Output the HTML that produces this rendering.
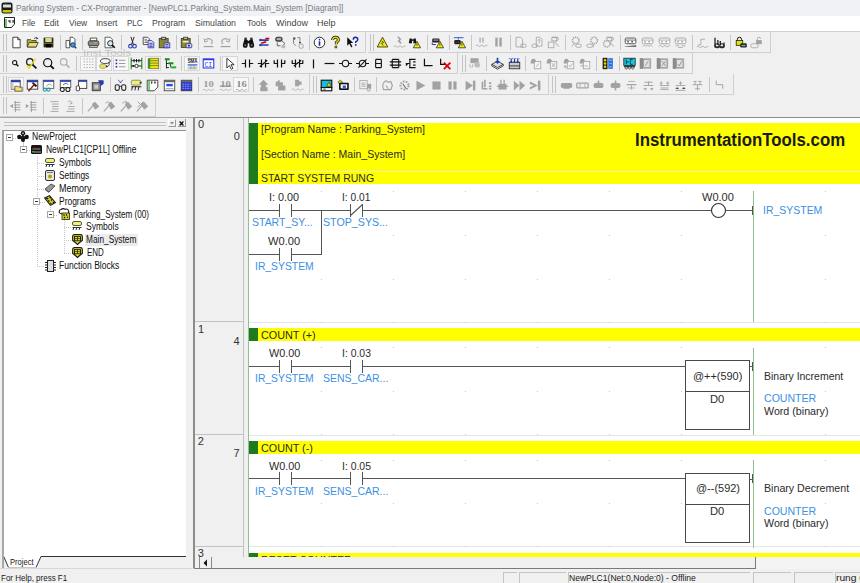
<!DOCTYPE html><html><head><meta charset="utf-8"><style>html,body{margin:0;padding:0;}body{width:860px;height:583px;overflow:hidden;position:relative;background:#f0f0f0;font-family:"Liberation Sans", sans-serif;}div{box-sizing:border-box;}svg{position:absolute;overflow:visible}</style></head><body>
<div style="position:absolute;left:0px;top:0px;width:860px;height:16px;background:#f1f2f6"></div>
<div style="position:absolute;left:0px;top:16px;width:860px;height:15px;background:#ffffff"></div>
<div style="position:absolute;left:0px;top:31px;width:860px;height:1px;background:#cfcfcf"></div>
<div style="position:absolute;left:0px;top:32px;width:860px;height:85px;background:#f0f0f0"></div>
<div style="position:absolute;left:0px;top:117px;width:860px;height:1px;background:#a9a9a9"></div>
<div style="position:absolute;left:0px;top:118px;width:194px;height:451px;background:#f0f0f0"></div>
<div style="position:absolute;left:4px;top:122px;width:162px;height:1px;background:#c0c0c0"></div>
<div style="position:absolute;left:4px;top:125px;width:162px;height:1px;background:#c0c0c0"></div>
<div style="position:absolute;left:2px;top:130px;width:184px;height:427px;background:#fff;border-top:1px solid #909090;border-left:2px solid #a8a8a8;"></div>
<div style="position:absolute;left:193px;top:117px;width:667px;height:452px;background:#fff;border-left:2px solid #8c8c8c;border-top:1px solid #8c8c8c;border-bottom:1px solid #8c8c8c"></div>
<div style="position:absolute;left:0px;top:569px;width:860px;height:14px;background:#f0f0f0"></div>
<div style="position:absolute;left:15.586945px;top:4.03px;font-size:9px;line-height:9px;color:#7c7c7c;font-weight:normal;white-space:nowrap;transform-origin:0 0;transform:scaleX(0.9179);">Parking System - CX-Programmer - [NewPLC1.Parking_System.Main_System [Diagram]]</div>
<div style="position:absolute;left:21.586855px;top:19.33px;font-size:9px;line-height:9px;color:#444;font-weight:normal;white-space:nowrap;transform-origin:0 0;transform:scaleX(0.9181);">File</div>
<div style="position:absolute;left:44.168945px;top:19.33px;font-size:9px;line-height:9px;color:#444;font-weight:normal;white-space:nowrap;transform-origin:0 0;transform:scaleX(0.9579);">Edit</div>
<div style="position:absolute;left:68.57583px;top:19.33px;font-size:9px;line-height:9px;color:#444;font-weight:normal;white-space:nowrap;transform-origin:0 0;transform:scaleX(0.9426);">View</div>
<div style="position:absolute;left:96.27322000000001px;top:19.33px;font-size:9px;line-height:9px;color:#444;font-weight:normal;white-space:nowrap;transform-origin:0 0;transform:scaleX(0.9484);">Insert</div>
<div style="position:absolute;left:127.20188499999999px;top:19.33px;font-size:9px;line-height:9px;color:#444;font-weight:normal;white-space:nowrap;transform-origin:0 0;transform:scaleX(0.8847);">PLC</div>
<div style="position:absolute;left:152.36494000000002px;top:19.33px;font-size:9px;line-height:9px;color:#444;font-weight:normal;white-space:nowrap;transform-origin:0 0;transform:scaleX(0.9668);">Program</div>
<div style="position:absolute;left:195.36237500000001px;top:19.33px;font-size:9px;line-height:9px;color:#444;font-weight:normal;white-space:nowrap;transform-origin:0 0;transform:scaleX(0.9725);">Simulation</div>
<div style="position:absolute;left:246.583885px;top:19.33px;font-size:9px;line-height:9px;color:#444;font-weight:normal;white-space:nowrap;transform-origin:0 0;transform:scaleX(0.9247);">Tools</div>
<div style="position:absolute;left:275.551665px;top:19.33px;font-size:9px;line-height:9px;color:#444;font-weight:normal;white-space:nowrap;transform-origin:0 0;transform:scaleX(0.9963);">Window</div>
<div style="position:absolute;left:316.74784px;top:19.33px;font-size:9px;line-height:9px;color:#444;font-weight:normal;white-space:nowrap;transform-origin:0 0;transform:scaleX(1.0048);">Help</div>
<div style="position:absolute;left:85px;top:234px;width:53px;height:12px;background:#ececec"></div>
<div style="position:absolute;left:32.1712px;top:132.09px;font-size:10px;line-height:10px;color:#101010;font-weight:normal;white-space:nowrap;transform-origin:0 0;transform:scaleX(0.8576);">NewProject</div>
<div style="position:absolute;left:45.57775px;top:145.09px;font-size:10px;line-height:10px;color:#101010;font-weight:normal;white-space:nowrap;transform-origin:0 0;transform:scaleX(0.8445);">NewPLC1[CP1L] Offline</div>
<div style="position:absolute;left:59.3784px;top:158.09px;font-size:10px;line-height:10px;color:#101010;font-weight:normal;white-space:nowrap;transform-origin:0 0;transform:scaleX(0.8432);">Symbols</div>
<div style="position:absolute;left:59.381699999999995px;top:171.09px;font-size:10px;line-height:10px;color:#101010;font-weight:normal;white-space:nowrap;transform-origin:0 0;transform:scaleX(0.8366);">Settings</div>
<div style="position:absolute;left:59.3516px;top:184.09px;font-size:10px;line-height:10px;color:#101010;font-weight:normal;white-space:nowrap;transform-origin:0 0;transform:scaleX(0.8968);">Memory</div>
<div style="position:absolute;left:59.377449999999996px;top:196.69px;font-size:10px;line-height:10px;color:#101010;font-weight:normal;white-space:nowrap;transform-origin:0 0;transform:scaleX(0.8451);">Programs</div>
<div style="position:absolute;left:73.09295px;top:209.5px;font-size:10px;line-height:10px;color:#101010;font-weight:normal;white-space:nowrap;transform-origin:0 0;transform:scaleX(0.8141);">Parking_System (00)</div>
<div style="position:absolute;left:86.4744px;top:222.09px;font-size:10px;line-height:10px;color:#101010;font-weight:normal;white-space:nowrap;transform-origin:0 0;transform:scaleX(0.8512);">Symbols</div>
<div style="position:absolute;left:86.4846px;top:235.09px;font-size:10px;line-height:10px;color:#101010;font-weight:normal;white-space:nowrap;transform-origin:0 0;transform:scaleX(0.8308);">Main_System</div>
<div style="position:absolute;left:86.50250000000001px;top:248.09px;font-size:10px;line-height:10px;color:#101010;font-weight:normal;white-space:nowrap;transform-origin:0 0;transform:scaleX(0.795);">END</div>
<div style="position:absolute;left:59.0725px;top:260.89px;font-size:10px;line-height:10px;color:#101010;font-weight:normal;white-space:nowrap;transform-origin:0 0;transform:scaleX(0.855);">Function Blocks</div>
<div style="position:absolute;left:1.2002875px;top:573.26px;font-size:9.5px;line-height:9.5px;color:#202020;font-weight:normal;white-space:nowrap;transform-origin:0 0;transform:scaleX(0.8415);">For Help, press F1</div>
<div style="position:absolute;left:195px;top:118px;width:48px;height:450px;background:#f0f0f0"></div>
<div style="position:absolute;left:243px;top:118px;width:1px;height:450px;background:#c2c2c2"></div>
<div style="position:absolute;left:244px;top:118px;width:4px;height:450px;background:#f0f0f0"></div>
<div style="position:absolute;left:195px;top:321px;width:48px;height:1px;background:#c2c2c2"></div>
<div style="position:absolute;left:195px;top:434px;width:48px;height:1px;background:#c2c2c2"></div>
<div style="position:absolute;left:195px;top:546px;width:48px;height:1px;background:#c2c2c2"></div>
<div style="position:absolute;left:198px;top:118.96px;font-size:11px;line-height:11px;color:#333;font-weight:normal;white-space:nowrap;">0</div>
<div style="position:absolute;left:233.7px;top:130.56px;font-size:11px;line-height:11px;color:#333;font-weight:normal;white-space:nowrap;">0</div>
<div style="position:absolute;left:198px;top:324.16px;font-size:11px;line-height:11px;color:#333;font-weight:normal;white-space:nowrap;">1</div>
<div style="position:absolute;left:233.6px;top:335.56px;font-size:11px;line-height:11px;color:#333;font-weight:normal;white-space:nowrap;">4</div>
<div style="position:absolute;left:197.8px;top:435.96px;font-size:11px;line-height:11px;color:#333;font-weight:normal;white-space:nowrap;">2</div>
<div style="position:absolute;left:233.6px;top:447.56px;font-size:11px;line-height:11px;color:#333;font-weight:normal;white-space:nowrap;">7</div>
<div style="position:absolute;left:197.8px;top:548.16px;font-size:11px;line-height:11px;color:#333;font-weight:normal;white-space:nowrap;">3</div>
<div style="position:absolute;left:248px;top:118px;width:1px;height:439px;background:#8ec28e"></div>
<div style="position:absolute;left:249px;top:322px;width:611px;height:1px;background:#e6e6e6"></div>
<div style="position:absolute;left:249px;top:435px;width:611px;height:1px;background:#e6e6e6"></div>
<div style="position:absolute;left:249px;top:546px;width:611px;height:1px;background:#e6e6e6"></div>
<div style="position:absolute;left:258px;top:123px;width:602px;height:61px;background:#ffff00"></div>
<div style="position:absolute;left:249px;top:123px;width:9px;height:61px;background:#1f7a1f"></div>
<div style="position:absolute;left:258px;top:171px;width:602px;height:1px;background:#f2f2a8"></div>
<div style="position:absolute;left:260.769085px;top:124.06px;font-size:11px;line-height:11px;color:#2b2b2b;font-weight:normal;white-space:nowrap;transform-origin:0 0;transform:scaleX(0.9653);">[Program Name : Parking_System]</div>
<div style="position:absolute;left:260.775355px;top:148.56px;font-size:11px;line-height:11px;color:#2b2b2b;font-weight:normal;white-space:nowrap;transform-origin:0 0;transform:scaleX(0.9539);">[Section Name : Main_System]</div>
<div style="position:absolute;left:260.77563000000004px;top:172.86px;font-size:11px;line-height:11px;color:#2b2b2b;font-weight:normal;white-space:nowrap;transform-origin:0 0;transform:scaleX(0.9534);">START SYSTEM RUNG</div>
<div style="position:absolute;left:635.35814px;top:131.05px;font-size:18px;line-height:18px;color:#1a1a1a;font-weight:bold;white-space:nowrap;transform-origin:0 0;transform:scaleX(0.9354);">InstrumentationTools.com</div>
<div style="position:absolute;left:258px;top:328px;width:602px;height:13px;background:#ffff00"></div>
<div style="position:absolute;left:249px;top:328px;width:9px;height:13px;background:#1f7a1f"></div>
<div style="position:absolute;left:261.160285px;top:329.76px;font-size:11px;line-height:11px;color:#2b2b2b;font-weight:normal;white-space:nowrap;transform-origin:0 0;transform:scaleX(0.9813);">COUNT (+)</div>
<div style="position:absolute;left:258px;top:441px;width:602px;height:13px;background:#ffff00"></div>
<div style="position:absolute;left:249px;top:441px;width:9px;height:13px;background:#1f7a1f"></div>
<div style="position:absolute;left:261.16132999999996px;top:442.76px;font-size:11px;line-height:11px;color:#2b2b2b;font-weight:normal;white-space:nowrap;transform-origin:0 0;transform:scaleX(0.9794);">COUNT (-)</div>
<div style="position:absolute;left:258px;top:553px;width:602px;height:13px;background:#ffff00"></div>
<div style="position:absolute;left:249px;top:553px;width:9px;height:13px;background:#1f7a1f"></div>
<div style="position:absolute;left:261.169085px;top:554.76px;font-size:11px;line-height:11px;color:#2b2b2b;font-weight:normal;white-space:nowrap;transform-origin:0 0;transform:scaleX(0.9653);">RESET COUNTER</div>
<div style="position:absolute;left:321px;top:191px;width:1px;height:1px;background:#c4c4c4"></div>
<div style="position:absolute;left:393px;top:191px;width:1px;height:1px;background:#c4c4c4"></div>
<div style="position:absolute;left:465px;top:191px;width:1px;height:1px;background:#c4c4c4"></div>
<div style="position:absolute;left:537px;top:191px;width:1px;height:1px;background:#c4c4c4"></div>
<div style="position:absolute;left:609px;top:191px;width:1px;height:1px;background:#c4c4c4"></div>
<div style="position:absolute;left:681px;top:191px;width:1px;height:1px;background:#c4c4c4"></div>
<div style="position:absolute;left:825px;top:191px;width:1px;height:1px;background:#c4c4c4"></div>
<div style="position:absolute;left:321px;top:235px;width:1px;height:1px;background:#c4c4c4"></div>
<div style="position:absolute;left:393px;top:235px;width:1px;height:1px;background:#c4c4c4"></div>
<div style="position:absolute;left:465px;top:235px;width:1px;height:1px;background:#c4c4c4"></div>
<div style="position:absolute;left:537px;top:235px;width:1px;height:1px;background:#c4c4c4"></div>
<div style="position:absolute;left:609px;top:235px;width:1px;height:1px;background:#c4c4c4"></div>
<div style="position:absolute;left:681px;top:235px;width:1px;height:1px;background:#c4c4c4"></div>
<div style="position:absolute;left:825px;top:235px;width:1px;height:1px;background:#c4c4c4"></div>
<div style="position:absolute;left:321px;top:279px;width:1px;height:1px;background:#c4c4c4"></div>
<div style="position:absolute;left:393px;top:279px;width:1px;height:1px;background:#c4c4c4"></div>
<div style="position:absolute;left:465px;top:279px;width:1px;height:1px;background:#c4c4c4"></div>
<div style="position:absolute;left:537px;top:279px;width:1px;height:1px;background:#c4c4c4"></div>
<div style="position:absolute;left:609px;top:279px;width:1px;height:1px;background:#c4c4c4"></div>
<div style="position:absolute;left:681px;top:279px;width:1px;height:1px;background:#c4c4c4"></div>
<div style="position:absolute;left:825px;top:279px;width:1px;height:1px;background:#c4c4c4"></div>
<div style="position:absolute;left:321px;top:322px;width:1px;height:1px;background:#c4c4c4"></div>
<div style="position:absolute;left:393px;top:322px;width:1px;height:1px;background:#c4c4c4"></div>
<div style="position:absolute;left:465px;top:322px;width:1px;height:1px;background:#c4c4c4"></div>
<div style="position:absolute;left:537px;top:322px;width:1px;height:1px;background:#c4c4c4"></div>
<div style="position:absolute;left:609px;top:322px;width:1px;height:1px;background:#c4c4c4"></div>
<div style="position:absolute;left:681px;top:322px;width:1px;height:1px;background:#c4c4c4"></div>
<div style="position:absolute;left:825px;top:322px;width:1px;height:1px;background:#c4c4c4"></div>
<div style="position:absolute;left:321px;top:347px;width:1px;height:1px;background:#c4c4c4"></div>
<div style="position:absolute;left:393px;top:347px;width:1px;height:1px;background:#c4c4c4"></div>
<div style="position:absolute;left:465px;top:347px;width:1px;height:1px;background:#c4c4c4"></div>
<div style="position:absolute;left:537px;top:347px;width:1px;height:1px;background:#c4c4c4"></div>
<div style="position:absolute;left:609px;top:347px;width:1px;height:1px;background:#c4c4c4"></div>
<div style="position:absolute;left:681px;top:347px;width:1px;height:1px;background:#c4c4c4"></div>
<div style="position:absolute;left:825px;top:347px;width:1px;height:1px;background:#c4c4c4"></div>
<div style="position:absolute;left:321px;top:391px;width:1px;height:1px;background:#c4c4c4"></div>
<div style="position:absolute;left:393px;top:391px;width:1px;height:1px;background:#c4c4c4"></div>
<div style="position:absolute;left:465px;top:391px;width:1px;height:1px;background:#c4c4c4"></div>
<div style="position:absolute;left:537px;top:391px;width:1px;height:1px;background:#c4c4c4"></div>
<div style="position:absolute;left:609px;top:391px;width:1px;height:1px;background:#c4c4c4"></div>
<div style="position:absolute;left:681px;top:391px;width:1px;height:1px;background:#c4c4c4"></div>
<div style="position:absolute;left:825px;top:391px;width:1px;height:1px;background:#c4c4c4"></div>
<div style="position:absolute;left:321px;top:434px;width:1px;height:1px;background:#c4c4c4"></div>
<div style="position:absolute;left:393px;top:434px;width:1px;height:1px;background:#c4c4c4"></div>
<div style="position:absolute;left:465px;top:434px;width:1px;height:1px;background:#c4c4c4"></div>
<div style="position:absolute;left:537px;top:434px;width:1px;height:1px;background:#c4c4c4"></div>
<div style="position:absolute;left:609px;top:434px;width:1px;height:1px;background:#c4c4c4"></div>
<div style="position:absolute;left:681px;top:434px;width:1px;height:1px;background:#c4c4c4"></div>
<div style="position:absolute;left:825px;top:434px;width:1px;height:1px;background:#c4c4c4"></div>
<div style="position:absolute;left:321px;top:460px;width:1px;height:1px;background:#c4c4c4"></div>
<div style="position:absolute;left:393px;top:460px;width:1px;height:1px;background:#c4c4c4"></div>
<div style="position:absolute;left:465px;top:460px;width:1px;height:1px;background:#c4c4c4"></div>
<div style="position:absolute;left:537px;top:460px;width:1px;height:1px;background:#c4c4c4"></div>
<div style="position:absolute;left:609px;top:460px;width:1px;height:1px;background:#c4c4c4"></div>
<div style="position:absolute;left:681px;top:460px;width:1px;height:1px;background:#c4c4c4"></div>
<div style="position:absolute;left:825px;top:460px;width:1px;height:1px;background:#c4c4c4"></div>
<div style="position:absolute;left:321px;top:503px;width:1px;height:1px;background:#c4c4c4"></div>
<div style="position:absolute;left:393px;top:503px;width:1px;height:1px;background:#c4c4c4"></div>
<div style="position:absolute;left:465px;top:503px;width:1px;height:1px;background:#c4c4c4"></div>
<div style="position:absolute;left:537px;top:503px;width:1px;height:1px;background:#c4c4c4"></div>
<div style="position:absolute;left:609px;top:503px;width:1px;height:1px;background:#c4c4c4"></div>
<div style="position:absolute;left:681px;top:503px;width:1px;height:1px;background:#c4c4c4"></div>
<div style="position:absolute;left:825px;top:503px;width:1px;height:1px;background:#c4c4c4"></div>
<div style="position:absolute;left:321px;top:546px;width:1px;height:1px;background:#c4c4c4"></div>
<div style="position:absolute;left:393px;top:546px;width:1px;height:1px;background:#c4c4c4"></div>
<div style="position:absolute;left:465px;top:546px;width:1px;height:1px;background:#c4c4c4"></div>
<div style="position:absolute;left:537px;top:546px;width:1px;height:1px;background:#c4c4c4"></div>
<div style="position:absolute;left:609px;top:546px;width:1px;height:1px;background:#c4c4c4"></div>
<div style="position:absolute;left:681px;top:546px;width:1px;height:1px;background:#c4c4c4"></div>
<div style="position:absolute;left:825px;top:546px;width:1px;height:1px;background:#c4c4c4"></div>
<div style="position:absolute;left:249px;top:210px;width:30px;height:1px;background:#555555"></div>
<div style="position:absolute;left:279px;top:204px;width:1px;height:13px;background:#555555"></div>
<div style="position:absolute;left:291px;top:204px;width:1px;height:13px;background:#555555"></div>
<div style="position:absolute;left:291px;top:210px;width:59px;height:1px;background:#555555"></div>
<div style="position:absolute;left:350px;top:204px;width:1px;height:13px;background:#555555"></div>
<div style="position:absolute;left:362px;top:204px;width:1px;height:13px;background:#555555"></div>
<svg style="left:350px;top:203px" width="13" height="14"><line x1="0.5" y1="12.5" x2="12.5" y2="1.5" stroke="#555555" stroke-width="1.1"/></svg>
<div style="position:absolute;left:363px;top:210px;width:348px;height:1px;background:#555555"></div>
<svg style="left:710px;top:202px" width="17" height="17"><circle cx="8.5" cy="8.5" r="7" fill="#fff" stroke="#333" stroke-width="1.1"/></svg>
<div style="position:absolute;left:726px;top:210px;width:27px;height:1px;background:#555555"></div>
<div style="position:absolute;left:752px;top:206px;width:1px;height:9px;background:#555555"></div>
<div style="position:absolute;left:321px;top:210px;width:1px;height:45px;background:#555555"></div>
<div style="position:absolute;left:249px;top:254px;width:30px;height:1px;background:#555555"></div>
<div style="position:absolute;left:279px;top:248px;width:1px;height:13px;background:#555555"></div>
<div style="position:absolute;left:291px;top:248px;width:1px;height:13px;background:#555555"></div>
<div style="position:absolute;left:291px;top:254px;width:31px;height:1px;background:#555555"></div>
<div style="position:absolute;left:753px;top:191px;width:1px;height:131px;background:#8ec28e"></div>
<div style="position:absolute;left:269.45891px;top:191.96px;font-size:11px;line-height:11px;color:#2b2b2b;font-weight:normal;white-space:nowrap;transform-origin:0 0;transform:scaleX(0.9838);">I: 0.00</div>
<div style="position:absolute;left:251.87546500000002px;top:216.56px;font-size:11px;line-height:11px;color:#3d8fe3;font-weight:normal;white-space:nowrap;transform-origin:0 0;transform:scaleX(0.9537);">START_SY...</div>
<div style="position:absolute;left:268.444555px;top:236.06px;font-size:11px;line-height:11px;color:#2b2b2b;font-weight:normal;white-space:nowrap;transform-origin:0 0;transform:scaleX(1.0099);">W0.00</div>
<div style="position:absolute;left:255.281955px;top:260.56px;font-size:11px;line-height:11px;color:#3d8fe3;font-weight:normal;white-space:nowrap;transform-origin:0 0;transform:scaleX(0.9419);">IR_SYSTEM</div>
<div style="position:absolute;left:342.19064499999996px;top:191.96px;font-size:11px;line-height:11px;color:#2b2b2b;font-weight:normal;white-space:nowrap;transform-origin:0 0;transform:scaleX(0.9261);">I: 0.01</div>
<div style="position:absolute;left:323.46639px;top:216.56px;font-size:11px;line-height:11px;color:#3d8fe3;font-weight:normal;white-space:nowrap;transform-origin:0 0;transform:scaleX(0.9702);">STOP_SYS...</div>
<div style="position:absolute;left:702.04813px;top:191.96px;font-size:11px;line-height:11px;color:#2b2b2b;font-weight:normal;white-space:nowrap;transform-origin:0 0;transform:scaleX(1.0034);">W0.00</div>
<div style="position:absolute;left:763.476565px;top:204.56px;font-size:11px;line-height:11px;color:#3d8fe3;font-weight:normal;white-space:nowrap;transform-origin:0 0;transform:scaleX(0.9517);">IR_SYSTEM</div>
<div style="position:absolute;left:249px;top:366px;width:30px;height:1px;background:#555555"></div>
<div style="position:absolute;left:279px;top:360px;width:1px;height:13px;background:#555555"></div>
<div style="position:absolute;left:291px;top:360px;width:1px;height:13px;background:#555555"></div>
<div style="position:absolute;left:291px;top:366px;width:59px;height:1px;background:#555555"></div>
<div style="position:absolute;left:350px;top:360px;width:1px;height:13px;background:#555555"></div>
<div style="position:absolute;left:362px;top:360px;width:1px;height:13px;background:#555555"></div>
<div style="position:absolute;left:363px;top:366px;width:323px;height:1px;background:#555555"></div>
<div style="position:absolute;left:685px;top:360px;width:65px;height:70px;border:1px solid #484848;background:#fff"></div>
<div style="position:absolute;left:686px;top:391px;width:63px;height:1px;background:#484848"></div>
<div style="position:absolute;left:753px;top:348px;width:1px;height:87px;background:#8ec28e"></div>
<div style="position:absolute;left:752px;top:362px;width:1px;height:9px;background:#555555"></div>
<div style="position:absolute;left:269.057095px;top:348.36px;font-size:11px;line-height:11px;color:#2b2b2b;font-weight:normal;white-space:nowrap;transform-origin:0 0;transform:scaleX(0.9871);">W0.00</div>
<div style="position:absolute;left:255.281955px;top:373.46px;font-size:11px;line-height:11px;color:#3d8fe3;font-weight:normal;white-space:nowrap;transform-origin:0 0;transform:scaleX(0.9419);">IR_SYSTEM</div>
<div style="position:absolute;left:342.179425px;top:348.36px;font-size:11px;line-height:11px;color:#2b2b2b;font-weight:normal;white-space:nowrap;transform-origin:0 0;transform:scaleX(0.9465);">I: 0.03</div>
<div style="position:absolute;left:323.47508px;top:373.46px;font-size:11px;line-height:11px;color:#3d8fe3;font-weight:normal;white-space:nowrap;transform-origin:0 0;transform:scaleX(0.9544);">SENS_CAR...</div>
<div style="position:absolute;left:692.854565px;top:370.56px;font-size:11px;line-height:11px;color:#2b2b2b;font-weight:normal;white-space:nowrap;transform-origin:0 0;transform:scaleX(0.9917);">@++(590)</div>
<div style="position:absolute;left:710.339935px;top:393.76px;font-size:11px;line-height:11px;color:#2b2b2b;font-weight:normal;white-space:nowrap;transform-origin:0 0;transform:scaleX(1.0183);">D0</div>
<div style="position:absolute;left:764.0758500000001px;top:370.56px;font-size:11px;line-height:11px;color:#2b2b2b;font-weight:normal;white-space:nowrap;transform-origin:0 0;transform:scaleX(0.953);">Binary Increment</div>
<div style="position:absolute;left:764.07156px;top:393.36px;font-size:11px;line-height:11px;color:#3d8fe3;font-weight:normal;white-space:nowrap;transform-origin:0 0;transform:scaleX(0.9608);">COUNTER</div>
<div style="position:absolute;left:764.066335px;top:405.56px;font-size:11px;line-height:11px;color:#2b2b2b;font-weight:normal;white-space:nowrap;transform-origin:0 0;transform:scaleX(0.9703);">Word (binary)</div>
<div style="position:absolute;left:249px;top:478px;width:30px;height:1px;background:#555555"></div>
<div style="position:absolute;left:279px;top:472px;width:1px;height:13px;background:#555555"></div>
<div style="position:absolute;left:291px;top:472px;width:1px;height:13px;background:#555555"></div>
<div style="position:absolute;left:291px;top:478px;width:59px;height:1px;background:#555555"></div>
<div style="position:absolute;left:350px;top:472px;width:1px;height:13px;background:#555555"></div>
<div style="position:absolute;left:362px;top:472px;width:1px;height:13px;background:#555555"></div>
<div style="position:absolute;left:363px;top:478px;width:323px;height:1px;background:#555555"></div>
<div style="position:absolute;left:685px;top:473px;width:65px;height:70px;border:1px solid #484848;background:#fff"></div>
<div style="position:absolute;left:686px;top:504px;width:63px;height:1px;background:#484848"></div>
<div style="position:absolute;left:753px;top:460px;width:1px;height:88px;background:#8ec28e"></div>
<div style="position:absolute;left:752px;top:474px;width:1px;height:9px;background:#555555"></div>
<div style="position:absolute;left:269.057095px;top:461.06px;font-size:11px;line-height:11px;color:#2b2b2b;font-weight:normal;white-space:nowrap;transform-origin:0 0;transform:scaleX(0.9871);">W0.00</div>
<div style="position:absolute;left:255.281955px;top:486.16px;font-size:11px;line-height:11px;color:#3d8fe3;font-weight:normal;white-space:nowrap;transform-origin:0 0;transform:scaleX(0.9419);">IR_SYSTEM</div>
<div style="position:absolute;left:342.179425px;top:461.06px;font-size:11px;line-height:11px;color:#2b2b2b;font-weight:normal;white-space:nowrap;transform-origin:0 0;transform:scaleX(0.9465);">I: 0.05</div>
<div style="position:absolute;left:323.47508px;top:486.16px;font-size:11px;line-height:11px;color:#3d8fe3;font-weight:normal;white-space:nowrap;transform-origin:0 0;transform:scaleX(0.9544);">SENS_CAR...</div>
<div style="position:absolute;left:695.5021999999999px;top:483.26px;font-size:11px;line-height:11px;color:#2b2b2b;font-weight:normal;white-space:nowrap;transform-origin:0 0;transform:scaleX(0.996);">@--(592)</div>
<div style="position:absolute;left:710.339935px;top:506.46px;font-size:11px;line-height:11px;color:#2b2b2b;font-weight:normal;white-space:nowrap;transform-origin:0 0;transform:scaleX(1.0183);">D0</div>
<div style="position:absolute;left:764.067985px;top:483.26px;font-size:11px;line-height:11px;color:#2b2b2b;font-weight:normal;white-space:nowrap;transform-origin:0 0;transform:scaleX(0.9673);">Binary Decrement</div>
<div style="position:absolute;left:764.07156px;top:506.06px;font-size:11px;line-height:11px;color:#3d8fe3;font-weight:normal;white-space:nowrap;transform-origin:0 0;transform:scaleX(0.9608);">COUNTER</div>
<div style="position:absolute;left:764.066335px;top:518.26px;font-size:11px;line-height:11px;color:#2b2b2b;font-weight:normal;white-space:nowrap;transform-origin:0 0;transform:scaleX(0.9703);">Word (binary)</div>
<div style="position:absolute;left:195px;top:557px;width:665px;height:12px;background:#f4f4f4"></div>
<div style="position:absolute;left:195px;top:557px;width:561px;height:12px;background:#f0f0f0;border-right:1px solid #7a7a7a;border-bottom:1px solid #7a7a7a"></div>
<div style="position:absolute;left:199px;top:557px;width:1px;height:11px;background:#8a8a8a"></div>
<div style="position:absolute;left:211px;top:557px;width:1px;height:11px;background:#8a8a8a"></div>
<svg style="left:203px;top:559px" width="5" height="8"><path d="M4 0.5 L0.5 4 L4 7.5 Z" fill="#111"/></svg>
<div style="position:absolute;left:13px;top:138px;width:4px;height:1px;background:repeating-linear-gradient(to right,#c8c8c8 0 1px,transparent 1px 2px)"></div>
<div style="position:absolute;left:23px;top:142px;width:1px;height:5px;background:#c8c8c8"></div>
<div style="position:absolute;left:27px;top:150px;width:4px;height:1px;background:repeating-linear-gradient(to right,#c8c8c8 0 1px,transparent 1px 2px)"></div>
<div style="position:absolute;left:37px;top:156px;width:1px;height:110px;background:repeating-linear-gradient(to bottom,#c8c8c8 0 1px,transparent 1px 2px)"></div>
<div style="position:absolute;left:37px;top:163px;width:8px;height:1px;background:repeating-linear-gradient(to right,#c8c8c8 0 1px,transparent 1px 2px)"></div>
<div style="position:absolute;left:37px;top:176px;width:8px;height:1px;background:repeating-linear-gradient(to right,#c8c8c8 0 1px,transparent 1px 2px)"></div>
<div style="position:absolute;left:37px;top:189px;width:8px;height:1px;background:repeating-linear-gradient(to right,#c8c8c8 0 1px,transparent 1px 2px)"></div>
<div style="position:absolute;left:37px;top:266px;width:8px;height:1px;background:repeating-linear-gradient(to right,#c8c8c8 0 1px,transparent 1px 2px)"></div>
<div style="position:absolute;left:40px;top:202px;width:5px;height:1px;background:repeating-linear-gradient(to right,#c8c8c8 0 1px,transparent 1px 2px)"></div>
<div style="position:absolute;left:50px;top:207px;width:1px;height:8px;background:repeating-linear-gradient(to bottom,#c8c8c8 0 1px,transparent 1px 2px)"></div>
<div style="position:absolute;left:54px;top:215px;width:4px;height:1px;background:repeating-linear-gradient(to right,#c8c8c8 0 1px,transparent 1px 2px)"></div>
<div style="position:absolute;left:64px;top:220px;width:1px;height:33px;background:repeating-linear-gradient(to bottom,#c8c8c8 0 1px,transparent 1px 2px)"></div>
<div style="position:absolute;left:64px;top:227px;width:8px;height:1px;background:repeating-linear-gradient(to right,#c8c8c8 0 1px,transparent 1px 2px)"></div>
<div style="position:absolute;left:64px;top:240px;width:8px;height:1px;background:repeating-linear-gradient(to right,#c8c8c8 0 1px,transparent 1px 2px)"></div>
<div style="position:absolute;left:64px;top:253px;width:8px;height:1px;background:repeating-linear-gradient(to right,#c8c8c8 0 1px,transparent 1px 2px)"></div>
<div style="position:absolute;left:6px;top:134px;width:7px;height:7px;border:1px solid #a6a6a6;background:#fff"></div>
<div style="position:absolute;left:8px;top:137px;width:3px;height:1px;background:#333"></div>
<div style="position:absolute;left:20px;top:146px;width:7px;height:7px;border:1px solid #a6a6a6;background:#fff"></div>
<div style="position:absolute;left:22px;top:149px;width:3px;height:1px;background:#333"></div>
<div style="position:absolute;left:33px;top:198px;width:7px;height:7px;border:1px solid #a6a6a6;background:#fff"></div>
<div style="position:absolute;left:35px;top:201px;width:3px;height:1px;background:#333"></div>
<div style="position:absolute;left:47px;top:211px;width:7px;height:7px;border:1px solid #a6a6a6;background:#fff"></div>
<div style="position:absolute;left:49px;top:214px;width:3px;height:1px;background:#333"></div>
<svg style="left:17px;top:131px" width="12" height="11" viewBox="0 0 12 11"><path d="M6 2.5 V9 M2.5 6 H9.5 M2.5 6 L6 9 L9.5 6" stroke="#111" stroke-width="1.6" fill="none"/><circle cx="6" cy="2.3" r="2.2" fill="#111"/><circle cx="2.3" cy="6" r="2.2" fill="#111"/><circle cx="9.7" cy="6" r="2.2" fill="#111"/><circle cx="6" cy="9" r="2" fill="#111"/><circle cx="6" cy="2.3" r="0.8" fill="#fff"/></svg>
<svg style="left:31px;top:145px" width="11" height="9" viewBox="0 0 11 9"><rect x="0" y="0" width="11" height="9" rx="1.5" fill="#151515"/><rect x="1.5" y="3.5" width="8" height="1" fill="#999"/><rect x="3" y="2.5" width="2" height="1.5" fill="#d00"/><rect x="1" y="6" width="2" height="1.5" fill="#1c1"/><rect x="3" y="6.5" width="7" height="1" fill="#aaa"/></svg>
<svg style="left:45px;top:158px" width="10" height="10" viewBox="0 0 10 10"><rect x="0.5" y="0.5" width="9" height="4" rx="1.5" fill="#f2f26a" stroke="#555" stroke-width="1"/><path d="M1 9 l1-3 M4 9 l1-3 M7 9 l1-3 M0.5 6.5 H9.5" stroke="#333" stroke-width="1"/></svg>
<svg style="left:45px;top:170px" width="10" height="11" viewBox="0 0 10 11"><rect x="0.5" y="0.5" width="9" height="10" rx="1.5" fill="#e8e8e8" stroke="#333" stroke-width="1"/><rect x="2" y="2" width="6" height="1" fill="#777"/><circle cx="5" cy="6.5" r="2" fill="#a8a800"/></svg>
<svg style="left:44px;top:183px" width="12" height="10" viewBox="0 0 12 10"><path d="M1 6 L7 1 L11 3 L5 9 Z" fill="#9a9a9a" stroke="#333" stroke-width="0.8"/><path d="M1 6 L5 9 L5 10 L1 7 Z" fill="#555"/></svg>
<svg style="left:44px;top:195px" width="12" height="11" viewBox="0 0 12 11"><path d="M0.6 3 L5.5 0.6 L11.4 7.5 L6.5 10.4 Z" fill="#d8d020" stroke="#1a1a1a" stroke-width="1.1"/><path d="M3 3 l1.2 1 M5.5 2 l1.5 1 M4 5.5 l1.5 1 M7 4.5 l1 1 M6 8 l1.5 0.5 M9 7 l1 1 M2.5 4 l0.5 -1" stroke="#111" stroke-width="1.3"/></svg>
<svg style="left:58px;top:208px" width="12" height="12" viewBox="0 0 12 12"><path d="M1.5 5 Q0.5 2 3 1.5 Q5 0 7 1.2 Q9.5 0.5 10.5 2.5 Q11.5 4 10 5.5" fill="#fff" stroke="#111" stroke-width="1.1"/><path d="M1.5 5 L4 6" stroke="#111"/><rect x="4" y="5" width="7.5" height="6.5" fill="#d8d020" stroke="#222" stroke-width="0.8"/><path d="M5.5 6.5 l1 1 M8 6.5 l1 1 M6 9 l1 1 M9 9 l1 0.5" stroke="#111" stroke-width="1.1"/></svg>
<svg style="left:72px;top:221px" width="10" height="10" viewBox="0 0 10 10"><rect x="0.5" y="0.5" width="9" height="4" rx="1.5" fill="#f2f26a" stroke="#555" stroke-width="1"/><path d="M1 9 l1-3 M4 9 l1-3 M7 9 l1-3 M0.5 6.5 H9.5" stroke="#333" stroke-width="1"/></svg>
<svg style="left:72px;top:234px" width="11" height="11" viewBox="0 0 11 11"><path d="M0.7 2.5 Q0.7 0.7 2.5 0.7 H8.5 Q10.3 0.7 10.3 2.5 V6.5 L7 9 L5.5 10.5 L4 9 L0.7 6.5 Z" fill="#f2ee20" stroke="#1a1a1a" stroke-width="1.2"/><rect x="2.5" y="2.6" width="6" height="4.2" fill="none" stroke="#222" stroke-width="1"/><path d="M5.5 2.6 V6.8 M2.5 4.7 H8.5" stroke="#222" stroke-width="0.8"/></svg>
<svg style="left:72px;top:247px" width="11" height="11" viewBox="0 0 11 11"><path d="M0.7 2.5 Q0.7 0.7 2.5 0.7 H8.5 Q10.3 0.7 10.3 2.5 V6.5 L7 9 L5.5 10.5 L4 9 L0.7 6.5 Z" fill="#f2ee20" stroke="#1a1a1a" stroke-width="1.2"/><rect x="2.5" y="2.6" width="6" height="4.2" fill="none" stroke="#222" stroke-width="1"/><path d="M5.5 2.6 V6.8 M2.5 4.7 H8.5" stroke="#222" stroke-width="0.8"/></svg>
<svg style="left:45px;top:260px" width="11" height="12" viewBox="0 0 11 12"><rect x="2.5" y="0.5" width="6" height="11" fill="#e0e0e0" stroke="#222" stroke-width="1"/><path d="M0 2.5 H2.5 M0 5 H2.5 M0 7.5 H2.5 M0 10 H2.5 M8.5 2.5 H11 M8.5 5 H11 M8.5 7.5 H11 M8.5 10 H11" stroke="#222" stroke-width="1"/></svg>
<div style="position:absolute;left:168px;top:119px;width:8px;height:8px;background:#f0f0f0;border-right:1px solid #9a9a9a;border-bottom:1px solid #9a9a9a;border-top:1px solid #fff;border-left:1px solid #fff"></div>
<svg style="left:170px;top:122px" width="4" height="3" viewBox="0 0 4 3"><path d="M0 0 H4 L2 2.5 Z" fill="#888"/></svg>
<div style="position:absolute;left:178px;top:119px;width:8px;height:8px;background:#f0f0f0;border-right:1px solid #9a9a9a;border-bottom:1px solid #9a9a9a"></div>
<svg style="left:179px;top:121px" width="5" height="5" viewBox="0 0 5 5"><path d="M0.6 0.6 L4.4 4.4 M4.4 0.6 L0.6 4.4" stroke="#111" stroke-width="1.4"/></svg>
<svg style="left:0px;top:555px" width="186" height="14" viewBox="0 0 186 14"><path d="M3 0 V13 H186 V1.5 L41 1.5 L36 12.5 H8.5 L3.5 1 Z" fill="#f0f0f0"/><path d="M3.5 1 L8.5 12.5 L36 12.5 L41 1.5 L186 1.5" fill="#fff" stroke="none"/><path d="M3.5 1 L8.5 12.5 M36 12.5 L41 1.5 L186 1.5" fill="none" stroke="#333" stroke-width="1"/><path d="M8.5 12.5 H36" stroke="#c8c8c8"/></svg>
<div style="position:absolute;left:0px;top:568px;width:194px;height:1px;background:#d8d8d8"></div>
<div style="position:absolute;left:2px;top:556px;width:2px;height:12px;background:#a8a8a8"></div>
<div style="position:absolute;left:10.221639999999999px;top:558.03px;font-size:9px;line-height:9px;color:#202020;font-weight:normal;white-space:nowrap;transform-origin:0 0;transform:scaleX(0.8408);">Project</div>
<div style="position:absolute;left:503px;top:572px;width:14px;height:12px;border-top:1px solid #c4c4c4;border-left:1px solid #c4c4c4"></div>
<div style="position:absolute;left:519px;top:572px;width:47px;height:12px;border-top:1px solid #c4c4c4;border-left:1px solid #c4c4c4"></div>
<div style="position:absolute;left:568px;top:572px;width:182px;height:12px;border-top:1px solid #c4c4c4;border-left:1px solid #c4c4c4"></div>
<div style="position:absolute;left:753px;top:572px;width:38px;height:12px;border-top:1px solid #c4c4c4;border-left:1px solid #c4c4c4"></div>
<div style="position:absolute;left:794px;top:572px;width:39px;height:12px;border-top:1px solid #c4c4c4;border-left:1px solid #c4c4c4"></div>
<div style="position:absolute;left:835px;top:572px;width:26px;height:12px;border-top:1px solid #c4c4c4;border-left:1px solid #c4c4c4"></div>
<div style="position:absolute;left:569.2720725px;top:573.26px;font-size:9.5px;line-height:9.5px;color:#202020;font-weight:normal;white-space:nowrap;transform-origin:0 0;transform:scaleX(0.9009);">NewPLC1(Net:0,Node:0) - Offline</div>
<div style="position:absolute;left:836.488235px;top:573.26px;font-size:9.5px;line-height:9.5px;color:#202020;font-weight:normal;white-space:nowrap;transform-origin:0 0;transform:scaleX(1.0774);">rung 0</div>
<div style="position:absolute;left:750px;top:366px;width:3px;height:1px;background:#555555"></div>
<div style="position:absolute;left:750px;top:479px;width:3px;height:1px;background:#555555"></div>
<div style="position:absolute;left:0px;top:32px;width:366px;height:21px;border-right:1px solid #cfcfcf;border-bottom:1px solid #cfcfcf"></div>
<div style="position:absolute;left:3px;top:34px;width:1px;height:17px;background:#c4c4c4"></div>
<div style="position:absolute;left:6px;top:34px;width:1px;height:17px;background:#c4c4c4"></div>
<div style="position:absolute;left:368px;top:32px;width:403px;height:21px;border-right:1px solid #cfcfcf;border-bottom:1px solid #cfcfcf"></div>
<div style="position:absolute;left:370px;top:34px;width:1px;height:17px;background:#c4c4c4"></div>
<div style="position:absolute;left:373px;top:34px;width:1px;height:17px;background:#c4c4c4"></div>
<svg style="left:9.50px;top:35.50px" width="13" height="13" viewBox="0 0 16 16"><path d="M3.5 1.5 H9.5 L12.5 4.5 V14.5 H3.5 Z" fill="#fff" stroke="#222" stroke-width="1"/><path d="M9.5 1.5 V4.5 H12.5" fill="none" stroke="#222"/></svg>
<svg style="left:26.10px;top:35.50px" width="13" height="13" viewBox="0 0 16 16"><path d="M1.5 4.5 H6 L7 5.5 H12.5 V13.5 H1.5 Z" fill="#b8b020" stroke="#333"/><path d="M1.5 13.5 L4 8 H15 L12.5 13.5 Z" fill="#e8e070" stroke="#333"/><path d="M10 3 Q12 1 14 3 M13 1.5 L14.5 3 L12.5 3.5" stroke="#222" fill="none"/></svg>
<svg style="left:42.20px;top:35.50px" width="13" height="13" viewBox="0 0 16 16"><rect x="2" y="2" width="12" height="12" fill="#2a2a00" /><rect x="4" y="2.5" width="8" height="5" fill="#d8d8a0"/><rect x="5" y="10" width="6" height="4" fill="#000"/><rect x="2.5" y="8.5" width="11" height="1" fill="#777"/></svg>
<svg style="left:64.20px;top:35.50px" width="13" height="13" viewBox="0 0 16 16"><path d="M2.5 5.5 H7 V14.5 H2.5 Z" fill="#fff" stroke="#333"/><path d="M7.5 1.5 H11 L13.5 4 V11 H7.5 Z" fill="#fff" stroke="#333"/><circle cx="11" cy="11" r="2.8" fill="#30a0e0" stroke="#125"/><path d="M13 13 L15 15" stroke="#125" stroke-width="1.6"/></svg>
<svg style="left:86.50px;top:35.50px" width="13" height="13" viewBox="0 0 16 16"><path d="M4 2.5 H12 V6 H4 Z" fill="#fff" stroke="#333"/><rect x="1.5" y="6" width="13" height="6" rx="2" fill="#8a8a8a" stroke="#333"/><rect x="3" y="12" width="10" height="2" fill="#ccc" stroke="#333" stroke-width="0.8"/><rect x="9" y="8" width="3" height="1" fill="#dd0"/></svg>
<svg style="left:103.00px;top:35.50px" width="13" height="13" viewBox="0 0 16 16"><path d="M2.5 1.5 H9 L11.5 4 V14.5 H2.5 Z" fill="#fff" stroke="#444"/><circle cx="9" cy="9" r="3.3" fill="#cfe8f0" stroke="#222" stroke-width="1.2"/><path d="M11.3 11.3 L14.5 14.5" stroke="#111" stroke-width="2"/></svg>
<svg style="left:125.70px;top:35.50px" width="13" height="13" viewBox="0 0 16 16"><path d="M6 1 L9 10 M10 1 L7 10" stroke="#222" stroke-width="1.2"/><circle cx="5.5" cy="12.5" r="2.2" fill="none" stroke="#2a3ab0" stroke-width="1.4"/><circle cx="10.5" cy="12.5" r="2.2" fill="none" stroke="#2a3ab0" stroke-width="1.4"/></svg>
<svg style="left:142.00px;top:35.50px" width="13" height="13" viewBox="0 0 16 16"><path d="M1.5 1.5 H7 L9 3.5 V10.5 H1.5 Z" fill="#fff" stroke="#333"/><path d="M3 4 H6 M3 6 H7 M3 8 H7" stroke="#555"/><path d="M7.5 5.5 H12 L14.5 8 V14.5 H7.5 Z" fill="#dde" stroke="#2a2ab0"/><path d="M9 9 H13 M9 11 H13 M9 13 H13" stroke="#2a2ab0"/></svg>
<svg style="left:158.30px;top:35.50px" width="13" height="13" viewBox="0 0 16 16"><rect x="1.5" y="3" width="11" height="11.5" fill="#8a8a30" stroke="#333"/><rect x="4.5" y="1.5" width="5" height="3" fill="#bbb" stroke="#333"/><rect x="7.5" y="8.5" width="7" height="6" fill="#dde" stroke="#2a2ab0"/><path d="M9 10.5 H13 M9 12.5 H13" stroke="#2a2ab0"/></svg>
<svg style="left:180.30px;top:35.50px" width="13" height="13" viewBox="0 0 16 16"><rect x="1.5" y="3" width="11" height="11" fill="#8a8a30" stroke="#333"/><rect x="4.5" y="1.5" width="5" height="3" fill="#bbb" stroke="#333"/><rect x="3.5" y="6" width="7" height="2" fill="#f0f0c0"/><rect x="7.5" y="9.5" width="7" height="5" rx="1" fill="#dde" stroke="#2a2ab0"/><circle cx="11" cy="12" r="1.3" fill="#2a2ab0"/></svg>
<svg style="left:202.30px;top:35.50px" width="13" height="13" viewBox="0 0 16 16"><path d="M4 5 Q8 1.5 12 5 Q13.5 8 11 10" fill="none" stroke="#a2a2a2" stroke-width="1.3"/><path d="M2.5 3 L3.5 7.5 L7.5 6" fill="none" stroke="#a2a2a2" stroke-width="1.2"/><path d="M2 13 H14" stroke="#a2a2a2" stroke-width="1.5"/></svg>
<svg style="left:219.40px;top:35.50px" width="13" height="13" viewBox="0 0 16 16"><path d="M12 5 Q8 1.5 4 5 Q2.5 8 5 10" fill="none" stroke="#a2a2a2" stroke-width="1.3"/><path d="M13.5 3 L12.5 7.5 L8.5 6" fill="none" stroke="#a2a2a2" stroke-width="1.2"/><path d="M2 13 H14" stroke="#a2a2a2" stroke-width="1.5"/></svg>
<svg style="left:241.50px;top:35.50px" width="13" height="13" viewBox="0 0 16 16"><path d="M3 4 L1 11 Q1 14.5 4 14.5 Q7 14.5 7 11 V5 Z M13 4 L15 11 Q15 14.5 12 14.5 Q9 14.5 9 11 V5 Z" fill="#111"/><rect x="6" y="6" width="4" height="3" fill="#111"/><rect x="3" y="2" width="3" height="3" fill="#333"/><rect x="10" y="2" width="3" height="3" fill="#333"/><circle cx="4" cy="11.5" r="1.2" fill="#777"/><circle cx="12" cy="11.5" r="1.2" fill="#777"/></svg>
<svg style="left:257.60px;top:35.50px" width="13" height="13" viewBox="0 0 16 16"><path d="M2 5 H13 M2 11 H13" stroke="#2a3ab0" stroke-width="2"/><path d="M9 3 H14 M4 9 L10 7" stroke="#c00" stroke-width="2"/><circle cx="3" cy="5" r="1.5" fill="#2a3ab0"/><circle cx="3" cy="11" r="1.5" fill="#2a3ab0"/></svg>
<svg style="left:273.90px;top:35.50px" width="13" height="13" viewBox="0 0 16 16"><rect x="2" y="1.5" width="8" height="5" rx="2" fill="#666" stroke="#222"/><rect x="3.5" y="3" width="5" height="1.5" fill="#ddd"/><path d="M4 8 L4 12 L8 12 M10 6 L13 9 L11 13" fill="none" stroke="#555" stroke-width="1.1"/><rect x="9" y="11" width="5" height="4" rx="1.5" fill="#bbb"/></svg>
<svg style="left:290.80px;top:35.50px" width="13" height="13" viewBox="0 0 16 16"><path d="M3 4 L3 9 L6 12 M8 2 L11 2 L11 6" fill="none" stroke="#777" stroke-width="1.1"/><circle cx="4" cy="3" r="1.5" fill="#555"/><circle cx="11" cy="8" r="1.3" fill="#444"/><rect x="10" y="10" width="5" height="5" rx="1.5" fill="none" stroke="#999"/></svg>
<svg style="left:313.00px;top:35.50px" width="13" height="13" viewBox="0 0 16 16"><circle cx="8" cy="8" r="6.5" fill="#fff" stroke="#111" stroke-width="1.1"/><rect x="7" y="6.5" width="2" height="5.5" fill="#1a2ab0"/><circle cx="8" cy="4.5" r="1.1" fill="#1a2ab0"/></svg>
<svg style="left:329.30px;top:35.50px" width="13" height="13" viewBox="0 0 16 16"><path d="M4.5 5 Q4.5 1.5 8 1.5 Q11.5 1.5 11.5 5 Q11.5 7 9 8 V10" fill="none" stroke="#111" stroke-width="3.6"/><path d="M4.5 5 Q4.5 1.5 8 1.5 Q11.5 1.5 11.5 5 Q11.5 7 9 8 V10" fill="none" stroke="#e8e000" stroke-width="1.8"/><rect x="7" y="12" width="3" height="3" fill="#111"/><rect x="7.7" y="12.7" width="1.6" height="1.6" fill="#e8e000"/></svg>
<svg style="left:345.90px;top:35.50px" width="13" height="13" viewBox="0 0 16 16"><path d="M1.5 1.5 L1.5 12 L4 9.5 L6.5 14 L8 13 L5.5 8.5 L9 8.5 Z" fill="#111"/><path d="M9 4.5 Q9 1.5 11.5 1.5 Q14.5 1.5 14.5 4.5 Q14.5 6 12 7 V8.5" fill="none" stroke="#1a2ab0" stroke-width="1.8"/><rect x="11" y="10" width="2" height="2" fill="#1a2ab0"/></svg>
<svg style="left:376.30px;top:35.50px" width="13" height="13" viewBox="0 0 16 16"><path d="M8 1.5 L14.5 13.5 H1.5 Z" fill="#f0f000" stroke="#333" stroke-width="1.1" stroke-linejoin="round"/><path d="M7 6 L9.5 8 L6.5 9 L9 11.5" fill="none" stroke="#333" stroke-width="1"/></svg>
<svg style="left:392.50px;top:35.50px" width="13" height="13" viewBox="0 0 16 16"><path d="M6 1 L9 4 L7 6 L10 9" fill="none" stroke="#a2a2a2" stroke-width="2"/><path d="M1 13 Q3 11 4 13 T7 13 T10 13 T13 13 T15 13" fill="none" stroke="#a2a2a2" stroke-width="1"/></svg>
<svg style="left:408.10px;top:35.50px" width="13" height="13" viewBox="0 0 16 16"><path d="M1 9 L2 3 H4.5 L5 9 Z M6.5 9 L7 3 H9.5 L10.5 9 Z" fill="#111"/><rect x="4" y="4" width="3" height="2" fill="#111"/><path d="M11 6.5 L15.5 14.5 H6.5 Z" fill="#f0f000" stroke="#333" stroke-linejoin="round"/><rect x="10.5" y="9" width="1" height="3" fill="#333"/></svg>
<svg style="left:431.40px;top:35.50px" width="13" height="13" viewBox="0 0 16 16"><rect x="1.5" y="3" width="9" height="5" rx="1.5" fill="#222"/><rect x="3" y="4.5" width="6" height="1" fill="#ddd"/><path d="M1.5 8 V10.5 H6" stroke="#2a3ab0" fill="none" stroke-width="1.2"/><path d="M11 6.5 L15.5 14.5 H6.5 Z" fill="#f0f000" stroke="#333" stroke-linejoin="round"/><rect x="10.5" y="9" width="1" height="3" fill="#333"/></svg>
<svg style="left:452.80px;top:35.50px" width="13" height="13" viewBox="0 0 16 16"><rect x="1" y="1.5" width="12" height="1.2" fill="#2a5ae0"/><rect x="6" y="1.5" width="1" height="3" fill="#2a5ae0"/><rect x="1.5" y="5" width="8" height="5" rx="1.5" fill="#222"/><rect x="3" y="7" width="2" height="1" fill="#c00"/><rect x="5.5" y="7" width="2" height="1" fill="#0a0"/><path d="M11 6.5 L15.5 14.5 H6.5 Z" fill="#f0f000" stroke="#333" stroke-linejoin="round"/><rect x="10.5" y="9" width="1" height="3" fill="#333"/></svg>
<svg style="left:474.80px;top:35.50px" width="13" height="13" viewBox="0 0 16 16"><rect x="5.5" y="2" width="1.5" height="6" fill="#a2a2a2"/><rect x="9" y="2" width="1.5" height="6" fill="#a2a2a2"/><path d="M1 12 Q3 10 4 12 T7 12 T10 12 T13 12 T15 12" fill="none" stroke="#a2a2a2" stroke-width="1"/></svg>
<svg style="left:491.70px;top:35.50px" width="13" height="13" viewBox="0 0 16 16"><rect x="4" y="2" width="3" height="11" fill="#a2a2a2"/><rect x="9" y="2" width="3" height="11" fill="#a2a2a2"/></svg>
<svg style="left:513.90px;top:35.50px" width="13" height="13" viewBox="0 0 16 16"><path d="M2.5 1.5 H8 L10.5 4 V13.5 H2.5 Z" fill="none" stroke="#a2a2a2"/><rect x="8" y="10" width="7" height="4" rx="2" fill="none" stroke="#a2a2a2"/></svg>
<svg style="left:530.80px;top:35.50px" width="13" height="13" viewBox="0 0 16 16"><path d="M6.5 1.5 H11 L13.5 4 V12.5 H6.5 Z" fill="none" stroke="#a2a2a2"/><path d="M10 4 V9 M8.5 5.5 L10 4 L11.5 5.5" stroke="#a2a2a2" fill="none"/><rect x="1" y="10" width="7" height="4" rx="2" fill="none" stroke="#a2a2a2"/></svg>
<svg style="left:546.80px;top:35.50px" width="13" height="13" viewBox="0 0 16 16"><rect x="1.5" y="7.5" width="7" height="7" fill="none" stroke="#a2a2a2"/><path d="M6 1.5 H13 L14 4 L10 8 L14.5 13" fill="none" stroke="#a2a2a2" stroke-width="1.2"/><rect x="6" y="2" width="6" height="4" fill="none" stroke="#a2a2a2"/></svg>
<svg style="left:569.60px;top:35.50px" width="13" height="13" viewBox="0 0 16 16"><circle cx="7" cy="5.5" r="4" fill="none" stroke="#a2a2a2" stroke-width="2" stroke-dasharray="1.5 1"/><rect x="7" y="10" width="7" height="4" rx="2" fill="none" stroke="#a2a2a2"/><path d="M2 13 L5 10" stroke="#a2a2a2"/></svg>
<svg style="left:585.90px;top:35.50px" width="13" height="13" viewBox="0 0 16 16"><circle cx="10" cy="5.5" r="4" fill="none" stroke="#a2a2a2" stroke-width="2" stroke-dasharray="1.5 1"/><rect x="1" y="10" width="7" height="4" rx="2" fill="none" stroke="#a2a2a2"/><path d="M9 10 V14" stroke="#a2a2a2"/></svg>
<svg style="left:601.90px;top:35.50px" width="13" height="13" viewBox="0 0 16 16"><circle cx="6" cy="9.5" r="4" fill="none" stroke="#a2a2a2" stroke-width="2" stroke-dasharray="1.5 1"/><path d="M6 1.5 H13 L14 4 L10 8 L14.5 13" fill="none" stroke="#a2a2a2" stroke-width="1.2"/><rect x="6" y="2" width="6" height="4" fill="none" stroke="#a2a2a2"/></svg>
<svg style="left:624.20px;top:35.50px" width="13" height="13" viewBox="0 0 16 16"><rect x="1.5" y="2.5" width="13" height="7" rx="1.5" fill="#fff" stroke="#555" stroke-width="1.2"/><path d="M1.5 5 H14.5" stroke="#555"/><rect x="4" y="6" width="2" height="2" fill="#555"/><rect x="9" y="6" width="2" height="2" fill="#555"/><path d="M1 13 L15 11 V13.5 H1 Z" fill="#777"/></svg>
<svg style="left:640.90px;top:35.50px" width="13" height="13" viewBox="0 0 16 16"><rect x="1.5" y="2.5" width="13" height="7" rx="1.5" fill="#fff" stroke="#a2a2a2" stroke-width="1.2"/><path d="M1.5 5 H14.5" stroke="#a2a2a2"/><rect x="4" y="6" width="2" height="2" fill="#a2a2a2"/><rect x="9" y="6" width="2" height="2" fill="#a2a2a2"/><path d="M2 13 L4 11 L6 13 L8 11 L10 13 L12 11 L14 13" fill="none" stroke="#a2a2a2" stroke-width="0.9"/></svg>
<svg style="left:657.70px;top:35.50px" width="13" height="13" viewBox="0 0 16 16"><rect x="1.5" y="2.5" width="13" height="7" rx="1.5" fill="#fff" stroke="#a2a2a2" stroke-width="1.2"/><path d="M1.5 5 H14.5" stroke="#a2a2a2"/><rect x="4" y="6" width="2" height="2" fill="#a2a2a2"/><rect x="9" y="6" width="2" height="2" fill="#a2a2a2"/><path d="M1 12.5 Q3 10.5 4 12.5 T7 12.5 T10 12.5 T13 12.5 T15 12.5" fill="none" stroke="#a2a2a2"/></svg>
<svg style="left:673.90px;top:35.50px" width="13" height="13" viewBox="0 0 16 16"><rect x="1.5" y="2.5" width="13" height="7" rx="1.5" fill="#fff" stroke="#a2a2a2" stroke-width="1.2"/><path d="M1.5 5 H14.5" stroke="#a2a2a2"/><rect x="4" y="6" width="2" height="2" fill="#a2a2a2"/><rect x="9" y="6" width="2" height="2" fill="#a2a2a2"/><path d="M2 12 H6 M10 12 H14 M5 14 H11" stroke="#a2a2a2"/></svg>
<svg style="left:696.20px;top:35.50px" width="13" height="13" viewBox="0 0 16 16"><path d="M2 11 H6 V4 H11" fill="none" stroke="#a2a2a2" stroke-width="1"/><path d="M1 13.5 Q3 11.5 4 13.5 T7 13.5 T10 13.5 T13 13.5 T15 13.5" fill="none" stroke="#a2a2a2"/></svg>
<svg style="left:712.60px;top:35.50px" width="13" height="13" viewBox="0 0 16 16"><path d="M2.5 2 V13.5 H13.5 V8" fill="none" stroke="#222" stroke-width="1.6"/><path d="M6 5 V11 M9 6 V11" stroke="#222" stroke-width="1.6"/><circle cx="5" cy="12" r="2.5" fill="none" stroke="#222" stroke-width="1.3"/><circle cx="11" cy="12" r="2.5" fill="none" stroke="#222" stroke-width="1.3"/></svg>
<svg style="left:734.90px;top:35.50px" width="13" height="13" viewBox="0 0 16 16"><path d="M3 6 V4 Q3 1.5 5.5 1.5 Q8 1.5 8 4 V6" fill="none" stroke="#111" stroke-width="1.2"/><rect x="1.5" y="5.5" width="8" height="6" fill="#e8e000" stroke="#222"/><rect x="6.5" y="9" width="8" height="5" rx="1.5" fill="#222"/><path d="M9 10 L11 8 L13 10" fill="#0a0"/><rect x="8" y="11.5" width="5" height="1" fill="#ddd"/></svg>
<svg style="left:749.80px;top:35.50px" width="13" height="13" viewBox="0 0 16 16"><path d="M9 5 V3.5 Q9 1.5 11 1.5 Q13 1.5 13 3.5" fill="none" stroke="#a2a2a2"/><rect x="7.5" y="5" width="7" height="5" fill="#a2a2a2"/><rect x="1" y="9.5" width="9" height="5" rx="2" fill="none" stroke="#a2a2a2"/></svg>
<div style="position:absolute;left:60px;top:35px;width:1px;height:15px;background:#c6c6c6"></div>
<div style="position:absolute;left:82px;top:35px;width:1px;height:15px;background:#c6c6c6"></div>
<div style="position:absolute;left:121px;top:35px;width:1px;height:15px;background:#c6c6c6"></div>
<div style="position:absolute;left:176px;top:35px;width:1px;height:15px;background:#c6c6c6"></div>
<div style="position:absolute;left:198px;top:35px;width:1px;height:15px;background:#c6c6c6"></div>
<div style="position:absolute;left:237px;top:35px;width:1px;height:15px;background:#c6c6c6"></div>
<div style="position:absolute;left:309px;top:35px;width:1px;height:15px;background:#c6c6c6"></div>
<div style="position:absolute;left:427px;top:35px;width:1px;height:15px;background:#c6c6c6"></div>
<div style="position:absolute;left:449px;top:35px;width:1px;height:15px;background:#c6c6c6"></div>
<div style="position:absolute;left:471px;top:35px;width:1px;height:15px;background:#c6c6c6"></div>
<div style="position:absolute;left:510px;top:35px;width:1px;height:15px;background:#c6c6c6"></div>
<div style="position:absolute;left:565px;top:35px;width:1px;height:15px;background:#c6c6c6"></div>
<div style="position:absolute;left:620px;top:35px;width:1px;height:15px;background:#c6c6c6"></div>
<div style="position:absolute;left:692px;top:35px;width:1px;height:15px;background:#c6c6c6"></div>
<div style="position:absolute;left:730px;top:35px;width:1px;height:15px;background:#c6c6c6"></div>
<div style="position:absolute;left:0px;top:53px;width:458px;height:21px;border-right:1px solid #cfcfcf;border-bottom:1px solid #cfcfcf"></div>
<div style="position:absolute;left:3px;top:55px;width:1px;height:17px;background:#c4c4c4"></div>
<div style="position:absolute;left:6px;top:55px;width:1px;height:17px;background:#c4c4c4"></div>
<div style="position:absolute;left:460px;top:53px;width:233px;height:21px;border-right:1px solid #cfcfcf;border-bottom:1px solid #cfcfcf"></div>
<div style="position:absolute;left:462px;top:55px;width:1px;height:17px;background:#c4c4c4"></div>
<div style="position:absolute;left:465px;top:55px;width:1px;height:17px;background:#c4c4c4"></div>
<svg style="left:9.00px;top:57.00px" width="13" height="13" viewBox="0 0 16 16"><circle cx="7" cy="7" r="2.6" fill="none" stroke="#111" stroke-width="1.3"/><path d="M9 9 L11.5 11.5" stroke="#111" stroke-width="1.8"/></svg>
<svg style="left:25.30px;top:57.00px" width="13" height="13" viewBox="0 0 16 16"><circle cx="6" cy="6" r="4" fill="none" stroke="#111" stroke-width="1.5"/><path d="M9 9 L14 14" stroke="#111" stroke-width="2.2"/><path d="M2 10 L5 14 L13 2" fill="none" stroke="#e8e000" stroke-width="1.6"/></svg>
<svg style="left:41.50px;top:57.00px" width="13" height="13" viewBox="0 0 16 16"><circle cx="7" cy="7" r="5" fill="none" stroke="#111" stroke-width="1.5"/><path d="M10.5 10.5 L14.5 14.5" stroke="#111" stroke-width="2.2"/></svg>
<svg style="left:57.80px;top:57.00px" width="13" height="13" viewBox="0 0 16 16"><circle cx="7" cy="6" r="4" fill="none" stroke="#b0b0b0" stroke-width="1.5"/><path d="M10 9 L14 13" stroke="#b0b0b0" stroke-width="2"/></svg>
<div style="position:absolute;left:80px;top:56px;width:16px;height:15px;border:1px solid #d6d6d6;background:#f8f8f8"></div>
<svg style="left:81.50px;top:57.00px" width="13" height="13" viewBox="0 0 16 16"><rect x="2.0" y="2.0" width="1.5" height="1" fill="#888"/><rect x="2.0" y="5.5" width="1.5" height="1" fill="#888"/><rect x="2.0" y="9.0" width="1.5" height="1" fill="#888"/><rect x="2.0" y="12.5" width="1.5" height="1" fill="#888"/><rect x="5.5" y="2.0" width="1.5" height="1" fill="#888"/><rect x="5.5" y="5.5" width="1.5" height="1" fill="#888"/><rect x="5.5" y="9.0" width="1.5" height="1" fill="#888"/><rect x="5.5" y="12.5" width="1.5" height="1" fill="#888"/><rect x="9.0" y="2.0" width="1.5" height="1" fill="#888"/><rect x="9.0" y="5.5" width="1.5" height="1" fill="#888"/><rect x="9.0" y="9.0" width="1.5" height="1" fill="#888"/><rect x="9.0" y="12.5" width="1.5" height="1" fill="#888"/><rect x="12.5" y="2.0" width="1.5" height="1" fill="#888"/><rect x="12.5" y="5.5" width="1.5" height="1" fill="#888"/><rect x="12.5" y="9.0" width="1.5" height="1" fill="#888"/><rect x="12.5" y="12.5" width="1.5" height="1" fill="#888"/></svg>
<div style="position:absolute;left:96px;top:56px;width:16px;height:15px;border:1px solid #d6d6d6;background:#f8f8f8"></div>
<svg style="left:97.80px;top:57.00px" width="13" height="13" viewBox="0 0 16 16"><ellipse cx="9" cy="5" rx="6" ry="3" fill="none" stroke="#333" stroke-width="1.1"/><path d="M13 6 Q15 9 13 11" fill="none" stroke="#333"/><rect x="2" y="9" width="8" height="5" rx="2.5" fill="#e8e840" stroke="#999"/><path d="M10 10 L13 11.5 L10 13 Z" fill="#111"/></svg>
<div style="position:absolute;left:113px;top:56px;width:16px;height:15px;border:1px solid #d6d6d6;background:#f8f8f8"></div>
<svg style="left:114.10px;top:57.00px" width="13" height="13" viewBox="0 0 16 16"><rect x="2" y="3" width="2" height="2" fill="#2a2ab0"/><rect x="2" y="7" width="2" height="2" fill="#2a2ab0"/><rect x="2" y="11" width="2" height="2" fill="#2a2ab0"/><path d="M6 4 H14 M6 8 H14 M6 12 H14" stroke="#888"/></svg>
<svg style="left:130.00px;top:57.00px" width="13" height="13" viewBox="0 0 16 16"><path d="M1.5 1 V15 M14.5 1 V15" stroke="#2a9a2a" stroke-width="1.5"/><path d="M1.5 4.5 H14.5 M1.5 11 H14.5" stroke="#111"/><path d="M5 2.5 V6.5 M8 2.5 V6.5 M11 2.5 V6.5" stroke="#111" stroke-width="1.2"/><circle cx="8" cy="11" r="2" fill="#fff" stroke="#111"/><rect x="3" y="10" width="2" height="2" fill="#111"/></svg>
<div style="position:absolute;left:145px;top:56px;width:16px;height:15px;border:1px solid #d6d6d6;background:#f8f8f8"></div>
<svg style="left:146.90px;top:57.00px" width="13" height="13" viewBox="0 0 16 16"><rect x="1" y="1.5" width="2.5" height="13" fill="#2a9a2a"/><rect x="3.5" y="1.5" width="11" height="13" fill="#e8e800" stroke="#555" stroke-width="0.8"/><path d="M3.5 4.5 H14.5 M3.5 7.5 H14.5 M3.5 10.5 H14.5" stroke="#555" stroke-width="0.8"/></svg>
<svg style="left:164.00px;top:57.00px" width="13" height="13" viewBox="0 0 16 16"><rect x="1" y="1.5" width="6" height="2.5" fill="#1a8a1a"/><path d="M3 4 V14 M3 8 H6 M3 13 H6" stroke="#111" stroke-width="1.1"/><rect x="5.5" y="6.5" width="6" height="2.5" fill="#1a8a1a"/><path d="M8 9 V12" stroke="#111"/><rect x="8" y="11.5" width="7" height="2.5" fill="#1aba1a"/></svg>
<div style="position:absolute;left:184px;top:56px;width:16px;height:15px;border:1px solid #d6d6d6;background:#f8f8f8"></div>
<svg style="left:186.00px;top:57.00px" width="13" height="13" viewBox="0 0 16 16"><path d="M2 2 H14" stroke="#555"/><text x="2" y="7.5" font-size="5.5" font-family="Liberation Sans" font-weight="bold" fill="#224">SMA</text><rect x="2" y="9" width="12" height="1.5" fill="#2a5ae0"/><path d="M2 12.5 H14 M2 14.5 H14 M6 9 V15 M10 9 V15" stroke="#888" stroke-width="0.8"/></svg>
<svg style="left:202.30px;top:57.00px" width="13" height="13" viewBox="0 0 16 16"><rect x="1.5" y="2.5" width="13" height="11" fill="#fff" stroke="#2a3ae0" stroke-width="1.3"/><rect x="1.5" y="2" width="13" height="2" fill="#2a3ae0"/><text x="3" y="12" font-size="8" font-family="Liberation Mono" fill="#2a3ae0">CI</text></svg>
<div style="position:absolute;left:222px;top:56px;width:16px;height:15px;border:1px solid #d6d6d6;background:#f8f8f8"></div>
<svg style="left:223.50px;top:57.00px" width="13" height="13" viewBox="0 0 16 16"><path d="M3.5 1.5 V13.5 L6.5 10.5 L9 15 L11 14 L8.5 9.5 L12.5 9.5 Z" fill="#fff" stroke="#111" stroke-width="1"/></svg>
<svg style="left:240.80px;top:57.00px" width="13" height="13" viewBox="0 0 16 16"><path d="M1 8 H5.5 M10.5 8 H15 M5.5 3 V13 M10.5 3 V13" stroke="#111" stroke-width="1.5"/></svg>
<svg style="left:257.10px;top:57.00px" width="13" height="13" viewBox="0 0 16 16"><path d="M1 8 H5.5 M10.5 8 H15 M5.5 3 V13 M10.5 3 V13 M3.5 12 L12.5 4" stroke="#111" stroke-width="1.5"/></svg>
<svg style="left:273.40px;top:57.00px" width="13" height="13" viewBox="0 0 16 16"><path d="M5.5 3 V13 M10.5 3 V13 M1 8 H5.5 M10.5 8 H15 M1.5 4 V8 M14.5 4 V8" stroke="#111" stroke-width="1.5"/></svg>
<svg style="left:290.50px;top:57.00px" width="13" height="13" viewBox="0 0 16 16"><path d="M5.5 3 V13 M10.5 3 V13 M1 8 H5.5 M10.5 8 H15 M1.5 4 V8 M14.5 4 V8 M3.5 11 L12.5 4" stroke="#111" stroke-width="1.5"/></svg>
<svg style="left:306.80px;top:57.00px" width="13" height="13" viewBox="0 0 16 16"><path d="M8 3 V14" stroke="#111" stroke-width="1.5"/></svg>
<svg style="left:323.10px;top:57.00px" width="13" height="13" viewBox="0 0 16 16"><path d="M2 8 H14" stroke="#111" stroke-width="1.5"/></svg>
<svg style="left:339.40px;top:57.00px" width="13" height="13" viewBox="0 0 16 16"><path d="M0 8 H4 M12 8 H16" stroke="#111" stroke-width="1.4"/><circle cx="8" cy="8" r="4" fill="none" stroke="#111" stroke-width="1.4"/></svg>
<svg style="left:355.60px;top:57.00px" width="13" height="13" viewBox="0 0 16 16"><path d="M0 8 H4 M12 8 H16 M3 13 L13 3" stroke="#111" stroke-width="1.4"/><circle cx="8" cy="8" r="4" fill="none" stroke="#111" stroke-width="1.4"/></svg>
<svg style="left:372.20px;top:57.00px" width="13" height="13" viewBox="0 0 16 16"><path d="M4.5 3 H11.5 M4.5 13 H11.5 M4.5 3 V13 M11.5 3 V13 M4.5 8 H11.5" stroke="#111" stroke-width="1.4" fill="none"/></svg>
<svg style="left:388.50px;top:57.00px" width="13" height="13" viewBox="0 0 16 16"><path d="M4 3 H12 M4 13 H12 M4 3 V13 M12 3 V13 M1 6 H15 M1 10 H15" stroke="#111" stroke-width="1.4" fill="none"/></svg>
<svg style="left:405.30px;top:57.00px" width="13" height="13" viewBox="0 0 16 16"><path d="M5 3 H13 M5 13 H13 M6 3 V13 M1 8 H6 M13 6 H10 M13 10 H10" stroke="#111" stroke-width="1.4" fill="none"/><path d="M1 11 L4 9.5 L1 8" fill="#111"/></svg>
<svg style="left:421.90px;top:57.00px" width="13" height="13" viewBox="0 0 16 16"><path d="M3 2 V10.5 H13" stroke="#111" stroke-width="1.5" fill="none"/></svg>
<svg style="left:439.00px;top:57.00px" width="13" height="13" viewBox="0 0 16 16"><path d="M2 2 V9 H8" stroke="#111" stroke-width="1.5" fill="none"/><path d="M6 7 L14 15 M14 7 L6 15" stroke="#e00000" stroke-width="2.2"/></svg>
<svg style="left:468.30px;top:57.00px" width="13" height="13" viewBox="0 0 16 16"><rect x="3" y="1.5" width="10" height="6" fill="#a2a2a2"/><path d="M2 9 L3 13 M6 9 L5 13 M10 9 L11 13 M14 9 L13 13" stroke="#a2a2a2"/><rect x="8" y="6" width="6" height="6" fill="#bbb"/></svg>
<svg style="left:490.60px;top:57.00px" width="13" height="13" viewBox="0 0 16 16"><path d="M1 9 L8 5 L15 9 L8 13 Z" fill="#ddd" stroke="#222"/><path d="M1 11 L8 15 L15 11" fill="none" stroke="#222"/><path d="M1 9 V11 M15 9 V11" stroke="#222"/><path d="M8 1 V7" stroke="#1a3ab0" stroke-width="2"/><path d="M5 5 L8 8.5 L11 5" fill="#1a3ab0"/></svg>
<svg style="left:507.70px;top:57.00px" width="13" height="13" viewBox="0 0 16 16"><rect x="1.5" y="6.5" width="13" height="8" fill="#ccc" stroke="#222"/><path d="M1.5 11 H14.5" stroke="#222"/><path d="M4 2 V7 M8 2 V7 M12 2 V7" stroke="#1a3ab0" stroke-width="1.4"/><path d="M2.5 5 L4 7 L5.5 5 M6.5 5 L8 7 L9.5 5 M10.5 5 L12 7 L13.5 5" fill="#1a3ab0"/><path d="M1 2 H15" stroke="#1a3ab0" stroke-dasharray="1 1"/></svg>
<svg style="left:528.90px;top:57.00px" width="13" height="13" viewBox="0 0 16 16"><path d="M2 8 Q2 2 5.5 2 Q9 2 9 8 Z" fill="#a2a2a2"/><rect x="6.5" y="5.5" width="8" height="9" fill="#f4f4f4" stroke="#a2a2a2"/><path d="M9 12 L12 8" stroke="#a2a2a2"/></svg>
<svg style="left:545.20px;top:57.00px" width="13" height="13" viewBox="0 0 16 16"><path d="M2 8 Q2 2 5.5 2 Q9 2 9 8 Z" fill="#a2a2a2"/><rect x="6.5" y="5.5" width="8" height="9" fill="#f4f4f4" stroke="#a2a2a2"/><path d="M8.5 7.5 L12.5 12.5 M12.5 7.5 L8.5 12.5" stroke="#a2a2a2"/></svg>
<svg style="left:561.50px;top:57.00px" width="13" height="13" viewBox="0 0 16 16"><path d="M2 8 Q2 2 5.5 2 Q9 2 9 8 Z" fill="#a2a2a2"/><rect x="6.5" y="5.5" width="8" height="9" fill="#f4f4f4" stroke="#a2a2a2"/><path d="M8 10 L10 12 L13 8" fill="none" stroke="#a2a2a2"/><path d="M4 10 V14 M2 12 H6" stroke="#a2a2a2"/></svg>
<svg style="left:578.10px;top:57.00px" width="13" height="13" viewBox="0 0 16 16"><path d="M2 8 Q2 2 5.5 2 Q9 2 9 8 Z" fill="#a2a2a2"/><rect x="6.5" y="5.5" width="8" height="9" fill="#f4f4f4" stroke="#a2a2a2"/><path d="M8 11 H12 M3 11 H7 L5.5 9.5" fill="none" stroke="#a2a2a2"/></svg>
<svg style="left:600.50px;top:57.00px" width="13" height="13" viewBox="0 0 16 16"><rect x="2" y="1" width="6" height="14" fill="#222"/><circle cx="5" cy="4" r="1.5" fill="#e8e000"/><circle cx="5" cy="8" r="1.5" fill="#e8e000"/><circle cx="5" cy="12" r="1.5" fill="#e8e000"/><rect x="9" y="1.5" width="5.5" height="13" fill="#2a5ae0"/><rect x="10" y="3" width="3.5" height="2" fill="#4ac0f0"/><rect x="10" y="7" width="3.5" height="2" fill="#4ac0f0"/><rect x="10" y="11" width="3.5" height="2" fill="#4ac0f0"/></svg>
<svg style="left:623.20px;top:57.00px" width="13" height="13" viewBox="0 0 16 16"><rect x="1" y="1.5" width="14" height="9" fill="#10d0d0" stroke="#222"/><path d="M4 3 V9 M4 6 H7 M9 3 H12 M9 3 V9 M9 9 H12" stroke="#117"/><path d="M1 11 H15 L14 13 H2 Z" fill="#333"/><circle cx="4" cy="13.5" r="1.5" fill="#ccc" stroke="#333" stroke-width="0.7"/><circle cx="8" cy="13.5" r="1.5" fill="#ccc" stroke="#333" stroke-width="0.7"/><circle cx="12" cy="13.5" r="1.5" fill="#ccc" stroke="#333" stroke-width="0.7"/></svg>
<svg style="left:638.80px;top:57.00px" width="13" height="13" viewBox="0 0 16 16"><rect x="1" y="1.5" width="14" height="13" fill="#b4b4b4"/><rect x="1" y="1.5" width="4" height="13" fill="#8c8c8c"/><rect x="5.5" y="3" width="8" height="10" fill="#e2e2e2" stroke="#9a9a9a"/><path d="M7.5 11 L11.5 5" stroke="#888"/></svg>
<svg style="left:655.70px;top:57.00px" width="13" height="13" viewBox="0 0 16 16"><rect x="1" y="1.5" width="14" height="13" fill="#b4b4b4"/><rect x="1" y="1.5" width="4" height="13" fill="#8c8c8c"/><rect x="5.5" y="3" width="8" height="10" fill="#e2e2e2" stroke="#9a9a9a"/><path d="M7 5 L12 11 M12 5 L7 11" stroke="#888"/></svg>
<svg style="left:672.00px;top:57.00px" width="13" height="13" viewBox="0 0 16 16"><rect x="1" y="1.5" width="14" height="13" fill="#b4b4b4"/><rect x="1" y="1.5" width="4" height="13" fill="#8c8c8c"/><rect x="5.5" y="3" width="8" height="10" fill="#e2e2e2" stroke="#9a9a9a"/><path d="M7 8.5 L9 11 L12 5" fill="none" stroke="#888"/></svg>
<div style="position:absolute;left:76px;top:56px;width:1px;height:15px;background:#c6c6c6"></div>
<div style="position:absolute;left:181px;top:56px;width:1px;height:15px;background:#c6c6c6"></div>
<div style="position:absolute;left:220px;top:56px;width:1px;height:15px;background:#c6c6c6"></div>
<div style="position:absolute;left:486px;top:56px;width:1px;height:15px;background:#c6c6c6"></div>
<div style="position:absolute;left:525px;top:56px;width:1px;height:15px;background:#c6c6c6"></div>
<div style="position:absolute;left:596px;top:56px;width:1px;height:15px;background:#c6c6c6"></div>
<div style="position:absolute;left:619px;top:56px;width:1px;height:15px;background:#c6c6c6"></div>
<div style="position:absolute;left:0px;top:74px;width:310px;height:21px;border-right:1px solid #cfcfcf;border-bottom:1px solid #cfcfcf"></div>
<div style="position:absolute;left:3px;top:76px;width:1px;height:17px;background:#c4c4c4"></div>
<div style="position:absolute;left:6px;top:76px;width:1px;height:17px;background:#c4c4c4"></div>
<div style="position:absolute;left:311px;top:74px;width:238px;height:21px;border-right:1px solid #cfcfcf;border-bottom:1px solid #cfcfcf"></div>
<div style="position:absolute;left:313px;top:76px;width:1px;height:17px;background:#c4c4c4"></div>
<div style="position:absolute;left:316px;top:76px;width:1px;height:17px;background:#c4c4c4"></div>
<div style="position:absolute;left:550px;top:74px;width:184px;height:21px;border-right:1px solid #cfcfcf;border-bottom:1px solid #cfcfcf"></div>
<div style="position:absolute;left:552px;top:76px;width:1px;height:17px;background:#c4c4c4"></div>
<div style="position:absolute;left:555px;top:76px;width:1px;height:17px;background:#c4c4c4"></div>
<div style="position:absolute;left:8px;top:77px;width:16px;height:15px;border:1px solid #d6d6d6;background:#f8f8f8"></div>
<svg style="left:9.80px;top:78.50px" width="13" height="13" viewBox="0 0 16 16"><rect x="1.5" y="1.5" width="11" height="11" fill="#fff" stroke="#222"/><rect x="1.5" y="1.5" width="11" height="2.5" fill="#2a3ab0"/><rect x="1.5" y="4" width="3" height="8.5" fill="#ccc"/><path d="M6 9 H10 L11 10 H15 V15 H6 Z" fill="#f0e070" stroke="#554"/></svg>
<svg style="left:26.10px;top:78.50px" width="13" height="13" viewBox="0 0 16 16"><rect x="1.5" y="1.5" width="13" height="11" fill="#fff" stroke="#222"/><rect x="1.5" y="1.5" width="13" height="2.5" fill="#2a3ab0"/><path d="M3 15 L10 7" stroke="#8a1a1a" stroke-width="1.8"/><path d="M7 5 L12 10 L14 8 L9 4 Z" fill="#222"/></svg>
<svg style="left:42.40px;top:78.50px" width="13" height="13" viewBox="0 0 16 16"><rect x="1.5" y="1.5" width="13" height="10" fill="#fff" stroke="#444"/><rect x="1.5" y="1.5" width="13" height="2" fill="#2a3ab0"/><path d="M5 9 L9 6 L12 8" fill="none" stroke="#888"/><circle cx="3.5" cy="13" r="2" fill="none" stroke="#1a9ab0" stroke-width="1.3"/><circle cx="8" cy="13" r="2" fill="none" stroke="#1a9ab0" stroke-width="1.3"/></svg>
<svg style="left:58.60px;top:78.50px" width="13" height="13" viewBox="0 0 16 16"><rect x="1.5" y="1.5" width="13" height="9" fill="#fff" stroke="#444"/><rect x="1.5" y="1.5" width="13" height="2" fill="#2a3ab0"/><path d="M5 7 L9 5 L11 7" fill="none" stroke="#2a3ab0"/><circle cx="4" cy="13" r="2.5" fill="none" stroke="#222" stroke-width="1.3"/><circle cx="11" cy="13" r="2.5" fill="none" stroke="#222" stroke-width="1.3"/></svg>
<svg style="left:74.90px;top:78.50px" width="13" height="13" viewBox="0 0 16 16"><rect x="4.5" y="1.5" width="10" height="10" fill="#fff" stroke="#222"/><rect x="4.5" y="1.5" width="10" height="2" fill="#2a3ab0"/><rect x="1.5" y="8.5" width="4" height="6" rx="1" fill="#fff" stroke="#222"/></svg>
<svg style="left:91.20px;top:78.50px" width="13" height="13" viewBox="0 0 16 16"><rect x="1.5" y="4.5" width="10" height="10" fill="#888" stroke="#333"/><rect x="4" y="7" width="5" height="5" fill="#ccc"/><path d="M9 2 H15 V6 L12 8" fill="#2a3ab0" stroke="#2a3ab0"/></svg>
<svg style="left:114.00px;top:78.50px" width="13" height="13" viewBox="0 0 16 16"><path d="M5 1 L9 5 M11 1 L7 5" stroke="#2a3ab0" stroke-width="1"/><rect x="1.5" y="7" width="5" height="7" rx="2" fill="none" stroke="#222" stroke-width="1.3"/><rect x="9.5" y="7" width="5" height="7" rx="2" fill="none" stroke="#222" stroke-width="1.3"/><path d="M6.5 9 H9.5" stroke="#222"/></svg>
<svg style="left:129.80px;top:78.50px" width="13" height="13" viewBox="0 0 16 16"><rect x="1.5" y="1.5" width="12" height="6" rx="2" fill="#f0f070" stroke="#777" stroke-width="1"/><path d="M12 3 L15 4.5 L12 6" fill="#333"/><path d="M1.5 9.5 H14 M3 9.5 L2 14 M7 9.5 L6 14 M11 9.5 L10 14" stroke="#222" stroke-width="1.2"/></svg>
<svg style="left:146.10px;top:78.50px" width="13" height="13" viewBox="0 0 16 16"><path d="M1.5 1.5 H14.5 V10 L10 14.5 H1.5 Z" fill="#fff" stroke="#222"/><rect x="3" y="2" width="1.5" height="12" fill="#2aaa2a"/><path d="M6 4 H8 M10 4 H12 M7 3 V6 M11 3 V6" stroke="#222"/></svg>
<svg style="left:163.20px;top:78.50px" width="13" height="13" viewBox="0 0 16 16"><rect x="1.5" y="1.5" width="13" height="13" fill="#fff" stroke="#333"/><rect x="1.5" y="1.5" width="13" height="2.5" fill="#666"/><rect x="4" y="6" width="8" height="3" fill="#2a4ae0"/><path d="M3 12 H13" stroke="#888"/></svg>
<svg style="left:179.50px;top:78.50px" width="13" height="13" viewBox="0 0 16 16"><rect x="1.5" y="1.5" width="13" height="13" fill="#2a3ae0" stroke="#333"/><rect x="1.5" y="1.5" width="13" height="2.5" fill="#666"/><path d="M3 6.5 H13 M3 9 H13 M3 11.5 H13" stroke="#aac" stroke-dasharray="2 1"/></svg>
<svg style="left:201.50px;top:78.50px" width="13" height="13" viewBox="0 0 16 16"><text x="1.5" y="9.5" font-size="10" font-weight="bold" font-family="Liberation Serif" fill="#9c9c9c" textLength="13" lengthAdjust="spacingAndGlyphs">10</text><path d="M1 13.5 Q2.5 11.5 4 13.5 T7 13.5 T10 13.5 T13 13.5 T15 13.5" fill="none" stroke="#a8a8a8" stroke-width="0.9"/></svg>
<svg style="left:218.50px;top:78.50px" width="13" height="13" viewBox="0 0 16 16"><text x="1.5" y="9.5" font-size="10" font-weight="bold" font-family="Liberation Serif" fill="#9c9c9c" textLength="13" lengthAdjust="spacingAndGlyphs">10</text><path d="M1 13.5 Q2.5 11.5 4 13.5 T7 13.5 T10 13.5 T13 13.5 T15 13.5" fill="none" stroke="#a8a8a8" stroke-width="0.9"/><path d="M1 8.8 H15" stroke="#8a8a8a" stroke-width="1.4"/></svg>
<div style="position:absolute;left:233px;top:77px;width:16px;height:15px;border:1px solid #d6d6d6;background:#f8f8f8"></div>
<svg style="left:234.80px;top:78.50px" width="13" height="13" viewBox="0 0 16 16"><text x="1.5" y="9.5" font-size="10" font-weight="bold" font-family="Liberation Serif" fill="#8c8c8c" textLength="13" lengthAdjust="spacingAndGlyphs">16</text><path d="M1 13.5 Q2.5 11.5 4 13.5 T7 13.5 T10 13.5 T13 13.5 T15 13.5" fill="none" stroke="#999" stroke-width="0.9"/></svg>
<svg style="left:257.10px;top:78.50px" width="13" height="13" viewBox="0 0 16 16"><path d="M8 1 L14 7 H11 V10 H13 V15 H4 V10 H5 V7 H2 Z" fill="#a2a2a2"/></svg>
<svg style="left:274.20px;top:78.50px" width="13" height="13" viewBox="0 0 16 16"><path d="M2 4 L7 1 V4 H11 V8 H14 V14 H5 V9 H2 Z" fill="#a2a2a2"/></svg>
<svg style="left:290.50px;top:78.50px" width="13" height="13" viewBox="0 0 16 16"><path d="M5 1 H10 V3 H13 V7 H10 V9 H5 Z" fill="#a2a2a2"/><path d="M1 13 Q3 11 4 13 T7 13 T10 13 T13 13 T15 13" fill="none" stroke="#a2a2a2" stroke-width="0.9"/></svg>
<svg style="left:319.80px;top:78.50px" width="13" height="13" viewBox="0 0 16 16"><rect x="1.5" y="1.5" width="13" height="9" fill="#10c0e0" stroke="#111" stroke-width="1.4"/><rect x="1.5" y="10.5" width="13" height="4" fill="#fff" stroke="#111" stroke-width="1.4"/><path d="M11 4 L14 9 H8 Z" fill="#e8e000" stroke="#333" stroke-width="0.8"/><rect x="4" y="12" width="3" height="1" fill="#222"/></svg>
<svg style="left:336.90px;top:78.50px" width="13" height="13" viewBox="0 0 16 16"><path d="M1 4 L4 1.5 L7 4 L4 6.5 Z" fill="#e8e000" stroke="#333" stroke-width="0.8"/><rect x="2.5" y="4.5" width="12" height="9" rx="1" fill="#111"/><rect x="4.5" y="6.5" width="8" height="5" fill="#fff"/><rect x="7" y="8" width="4" height="3" fill="#2a5ae0"/></svg>
<svg style="left:358.90px;top:78.50px" width="13" height="13" viewBox="0 0 16 16"><rect x="1" y="2" width="9" height="10" fill="#f4f4f4" stroke="#a2a2a2"/><path d="M3 5 H8 M3 7 H8 M3 9 H8" stroke="#a2a2a2"/><rect x="10" y="6" width="5" height="6" fill="#a2a2a2"/><circle cx="12" cy="13" r="2" fill="#ddd" stroke="#a2a2a2"/></svg>
<svg style="left:381.20px;top:78.50px" width="13" height="13" viewBox="0 0 16 16"><path d="M3 13 Q1 9 3 5 L6 2 L9 4 L12 3 L14 8 L12 13 Z" fill="none" stroke="#a2a2a2" stroke-width="1.4"/><path d="M6 8 L9 12" stroke="#a2a2a2" stroke-width="1.4"/></svg>
<svg style="left:397.50px;top:78.50px" width="13" height="13" viewBox="0 0 16 16"><circle cx="8" cy="8" r="5" fill="none" stroke="#a2a2a2" stroke-width="2.5" stroke-dasharray="2 1.5"/><path d="M6 6 L10 12" stroke="#777" stroke-width="1.4"/></svg>
<svg style="left:413.80px;top:78.50px" width="13" height="13" viewBox="0 0 16 16"><path d="M3 2 L14 8 L3 14 Z" fill="#a2a2a2"/></svg>
<svg style="left:430.00px;top:78.50px" width="13" height="13" viewBox="0 0 16 16"><rect x="3" y="3" width="10" height="10" fill="#a2a2a2"/></svg>
<svg style="left:446.30px;top:78.50px" width="13" height="13" viewBox="0 0 16 16"><rect x="3" y="3" width="4" height="10" fill="#a2a2a2"/><rect x="9" y="3" width="4" height="10" fill="#a2a2a2"/></svg>
<svg style="left:463.50px;top:78.50px" width="13" height="13" viewBox="0 0 16 16"><path d="M2 2 L11 8 L2 14 Z" fill="#a2a2a2"/><rect x="11" y="2" width="3" height="12" fill="#a2a2a2"/></svg>
<svg style="left:479.70px;top:78.50px" width="13" height="13" viewBox="0 0 16 16"><path d="M3 3 V12 H9 M6 1 V10 M11 5 H14 M11 9 H14 M11 12 H14" stroke="#a2a2a2" stroke-width="2" fill="none"/></svg>
<svg style="left:495.50px;top:78.50px" width="13" height="13" viewBox="0 0 16 16"><path d="M3 6 H13 V13 H3 Z" fill="#a2a2a2"/><path d="M6 1 V6 M10 1 V6 M1 9 H15" stroke="#a2a2a2" stroke-width="1.5"/></svg>
<svg style="left:512.50px;top:78.50px" width="13" height="13" viewBox="0 0 16 16"><path d="M1 2 L8 8 L1 14 Z M8 2 L15 8 L8 14 Z" fill="#a2a2a2"/></svg>
<svg style="left:528.90px;top:78.50px" width="13" height="13" viewBox="0 0 16 16"><path d="M1 3 L11 8 L1 13 V10 L6 8 L1 6 Z" fill="#a2a2a2"/><rect x="11" y="2" width="3" height="12" fill="#a2a2a2"/></svg>
<svg style="left:559.80px;top:78.50px" width="13" height="13" viewBox="0 0 16 16"><rect x="1" y="5" width="14" height="6" rx="2" fill="#a2a2a2"/><rect x="4" y="11" width="8" height="1" fill="#a2a2a2"/></svg>
<svg style="left:576.10px;top:78.50px" width="13" height="13" viewBox="0 0 16 16"><rect x="1" y="5" width="14" height="6" rx="1" fill="none" stroke="#a2a2a2" stroke-width="1.5"/><path d="M5 6 V10 M11 6 V10" stroke="#a2a2a2"/></svg>
<svg style="left:592.40px;top:78.50px" width="13" height="13" viewBox="0 0 16 16"><rect x="2" y="5" width="12" height="6" rx="2" fill="#a2a2a2"/><rect x="7" y="2" width="2" height="3" fill="#a2a2a2"/></svg>
<svg style="left:609.00px;top:78.50px" width="13" height="13" viewBox="0 0 16 16"><rect x="2" y="5" width="12" height="6" rx="2" fill="#a2a2a2"/><rect x="7" y="11" width="2" height="3" fill="#a2a2a2"/><rect x="7" y="2" width="2" height="3" fill="#a2a2a2"/></svg>
<svg style="left:625.30px;top:78.50px" width="13" height="13" viewBox="0 0 16 16"><path d="M2 7 H14" stroke="#a2a2a2" stroke-width="1.5"/><path d="M8 7 V13 M4 3 H12 M4 11 H12" stroke="#a2a2a2"/></svg>
<svg style="left:641.50px;top:78.50px" width="13" height="13" viewBox="0 0 16 16"><path d="M2 8 H14 M8 3 V8 M4 11 V14 M12 11 V14 M2 12 H6 M10 12 H14 M3 4 H13" stroke="#a2a2a2" stroke-width="1.2"/></svg>
<svg style="left:657.80px;top:78.50px" width="13" height="13" viewBox="0 0 16 16"><path d="M2 8 H14 M4 3 V8 M12 3 V8 M2 5 H6 M10 5 H14 M3 11 H13 M3 13 H13" stroke="#a2a2a2" stroke-width="1.1"/></svg>
<svg style="left:674.10px;top:78.50px" width="13" height="13" viewBox="0 0 16 16"><path d="M2 8 H14 M8 3 V8 M6 5 H10 M2 12 L4 10 L6 12 M10 12 L12 10 L14 12 M2 14 H14" stroke="#a2a2a2" stroke-width="1.1"/></svg>
<svg style="left:690.90px;top:78.50px" width="13" height="13" viewBox="0 0 16 16"><path d="M2 7 H14 M8 7 V14 M5 12 H11 M3 3 H7 M9 3 H13 M5 3 V7 M11 3 V7" stroke="#a2a2a2" stroke-width="1.1"/></svg>
<svg style="left:713.20px;top:78.50px" width="13" height="13" viewBox="0 0 16 16"><path d="M4 2 V7 H12 V12" stroke="#a2a2a2" stroke-width="1.2" fill="none"/></svg>
<div style="position:absolute;left:110px;top:77px;width:1px;height:15px;background:#c6c6c6"></div>
<div style="position:absolute;left:198px;top:77px;width:1px;height:15px;background:#c6c6c6"></div>
<div style="position:absolute;left:253px;top:77px;width:1px;height:15px;background:#c6c6c6"></div>
<div style="position:absolute;left:354px;top:77px;width:1px;height:15px;background:#c6c6c6"></div>
<div style="position:absolute;left:376px;top:77px;width:1px;height:15px;background:#c6c6c6"></div>
<div style="position:absolute;left:709px;top:77px;width:1px;height:15px;background:#c6c6c6"></div>
<div style="position:absolute;left:0px;top:95px;width:156px;height:22px;border-right:1px solid #cfcfcf;border-bottom:1px solid #cfcfcf"></div>
<div style="position:absolute;left:3px;top:97px;width:1px;height:17px;background:#c4c4c4"></div>
<div style="position:absolute;left:6px;top:97px;width:1px;height:17px;background:#c4c4c4"></div>
<svg style="left:8.50px;top:100.00px" width="13" height="13" viewBox="0 0 16 16"><path d="M6 3 H14 M6 6 H14 M6 9 H14 M6 12 H14 M8 1 V15" stroke="#a2a2a2" stroke-width="1.2"/><path d="M1 7.5 L5 5 V10 Z" fill="#a2a2a2"/></svg>
<svg style="left:25.30px;top:100.00px" width="13" height="13" viewBox="0 0 16 16"><path d="M6 3 H14 M6 6 H14 M6 9 H14 M6 12 H14 M8 1 V15" stroke="#a2a2a2" stroke-width="1.2"/><path d="M5 7.5 L1 5 V10 Z" fill="#a2a2a2"/></svg>
<svg style="left:47.50px;top:100.00px" width="13" height="13" viewBox="0 0 16 16"><path d="M3 2 H13 M5 5 H13 M5 8 H13 M5 11 H13 M3 14 H13" stroke="#a2a2a2" stroke-width="1.1"/></svg>
<svg style="left:63.50px;top:100.00px" width="13" height="13" viewBox="0 0 16 16"><path d="M5 2 Q9 0 10 4 L7 5 M5 8 H13 M5 11 H13 M3 14 H13" fill="none" stroke="#a2a2a2" stroke-width="1.1"/></svg>
<svg style="left:86.60px;top:100.00px" width="13" height="13" viewBox="0 0 16 16"><path d="M1 14 L9 5" stroke="#a2a2a2" stroke-width="1.3"/><path d="M6 5 L10 2 L15 8 L10 12 Z" fill="#a2a2a2"/></svg>
<svg style="left:103.30px;top:100.00px" width="13" height="13" viewBox="0 0 16 16"><path d="M1 14 L9 5" stroke="#a2a2a2" stroke-width="1.3"/><path d="M6 5 L10 2 L15 8 L10 12 Z" fill="#a2a2a2"/><path d="M3 4 Q5 1 8 3" fill="none" stroke="#a2a2a2" stroke-width="1.2"/></svg>
<svg style="left:120.10px;top:100.00px" width="13" height="13" viewBox="0 0 16 16"><path d="M1 14 L9 5" stroke="#a2a2a2" stroke-width="1.3"/><path d="M6 5 L10 2 L15 8 L10 12 Z" fill="#a2a2a2"/><path d="M3 4 Q5 1 8 3 M8 3 L7 1" fill="none" stroke="#a2a2a2" stroke-width="1.2"/></svg>
<svg style="left:135.80px;top:100.00px" width="13" height="13" viewBox="0 0 16 16"><path d="M1 14 L9 5" stroke="#a2a2a2" stroke-width="1.3"/><path d="M6 5 L10 2 L15 8 L10 12 Z" fill="#a2a2a2"/><path d="M2 2 L9 9 M9 2 L2 9" stroke="#a2a2a2" stroke-width="1.2"/></svg>
<div style="position:absolute;left:43px;top:98px;width:1px;height:16px;background:#c6c6c6"></div>
<div style="position:absolute;left:82px;top:98px;width:1px;height:16px;background:#c6c6c6"></div>
<div style="position:absolute;left:83.427735px;top:49.33px;font-size:9px;line-height:9px;color:rgba(140,140,140,0.45);font-weight:normal;white-space:nowrap;transform-origin:0 0;transform:scaleX(1.2717);">Inst Tools</div>
<svg style="left:1px;top:2px" width="12" height="12" viewBox="0 0 12 12"><rect x="0.5" y="0.5" width="11" height="11" rx="2" fill="#1a1a1a"/><rect x="2" y="2.5" width="8" height="3" fill="#ddd"/><rect x="1.5" y="8" width="9" height="2.5" rx="1" fill="#c8c800"/><rect x="4" y="0.5" width="1" height="1" fill="#0c0"/></svg>
<svg style="left:4px;top:17px" width="12" height="11" viewBox="0 0 12 11"><path d="M0.5 0.5 H10.5 V7 L7.5 10.5 H0.5 Z" fill="#fff" stroke="#222"/><path d="M2 2 V10" stroke="#1a9a1a" stroke-width="1.2"/><path d="M4 4 H6 M6 3 V6 M9 3 V6 M9 4 H10.5" stroke="#222"/></svg>
</body></html>
